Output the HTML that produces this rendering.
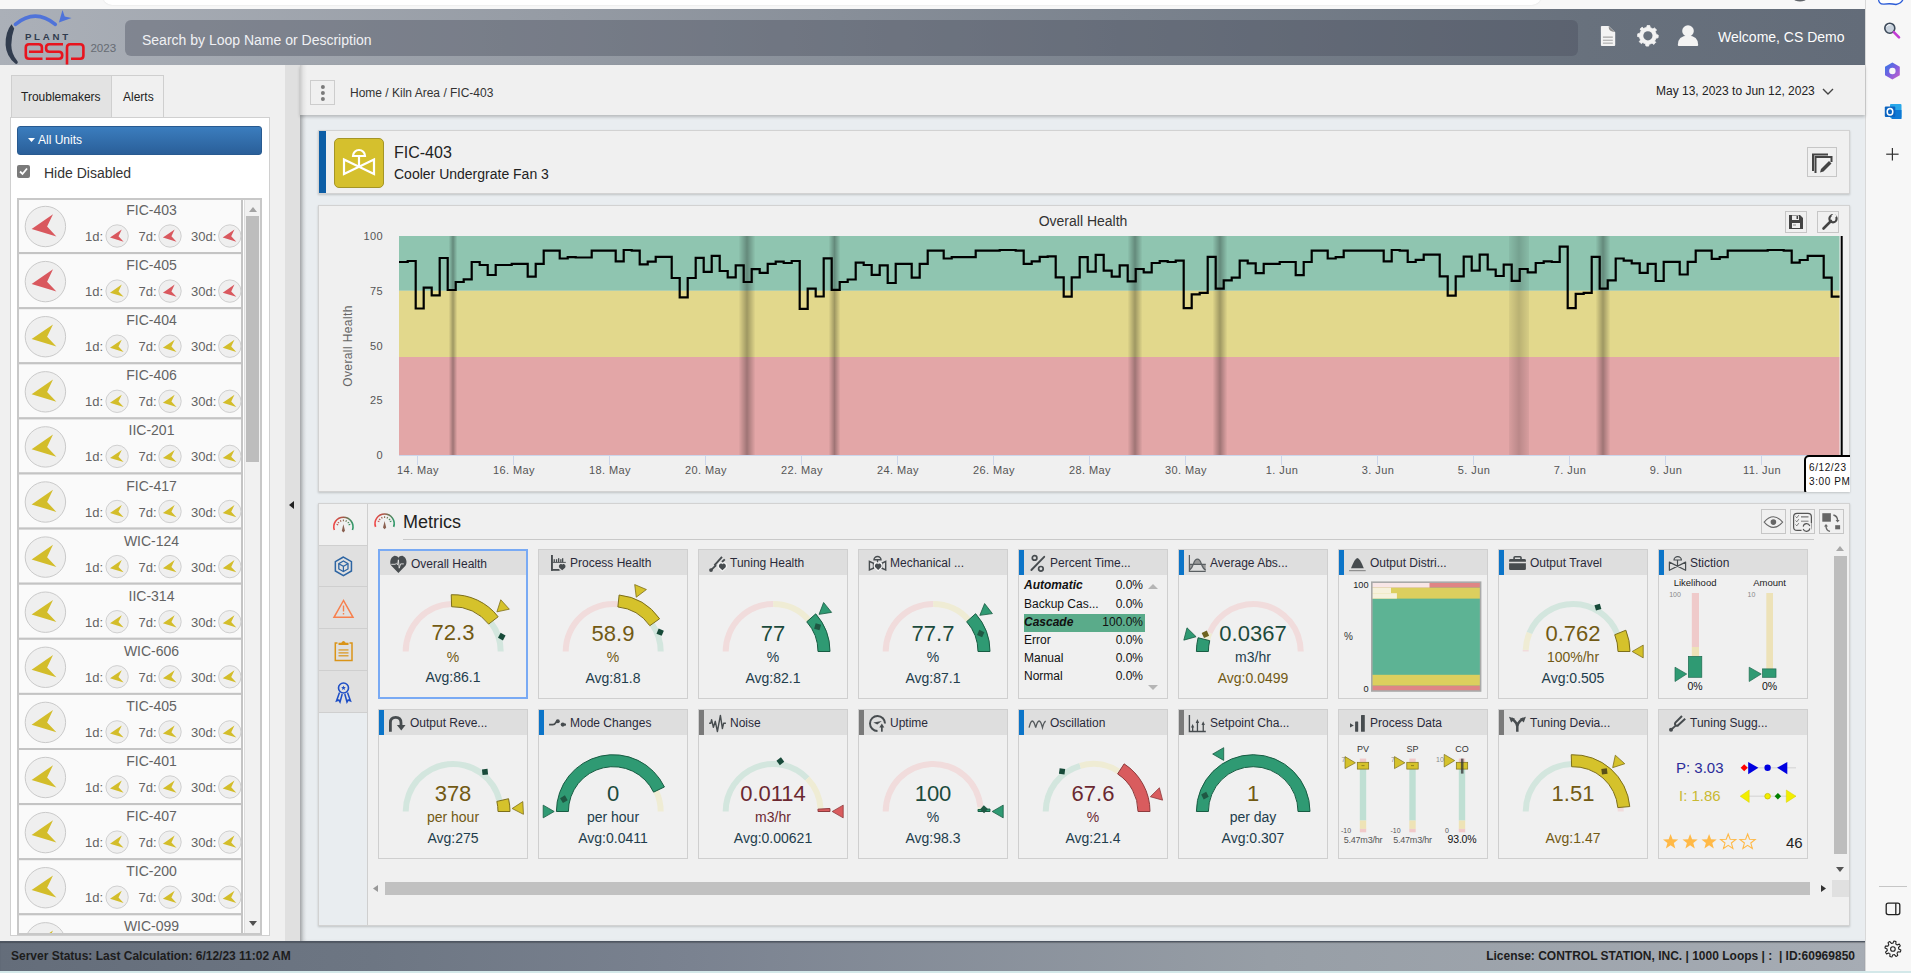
<!DOCTYPE html><html><head><meta charset="utf-8"><style>
*{box-sizing:border-box;margin:0;padding:0}
html,body{width:1911px;height:973px;overflow:hidden;background:#f7f7f7;font-family:"Liberation Sans",sans-serif}
body{position:relative}
.a{position:absolute}
.nw{white-space:nowrap}
.card{position:absolute;background:#f0f0f0;border:1px solid #d2d2d2;box-shadow:0 1px 2px rgba(0,0,0,0.18)}
.btn{position:absolute;background:#f0f0f0;border:1px solid #c6c6c6}
</style></head><body><div class="a" style="left:0;top:0;width:1911px;height:10px;background:#f7f7f7"></div>
<div class="a" style="left:103px;top:-14px;width:1438px;height:19px;background:#fff;border-radius:9px;box-shadow:0 0 2px rgba(0,0,0,0.12)"></div>
<div class="a" style="left:1865px;top:0;width:46px;height:973px;background:#f7f7f7;border-left:1px solid #d8d8d8"></div>
<svg class="a" style="left:1760px;top:0" width="151" height="973"><ellipse cx="40" cy="-1" rx="6" ry="2.6" fill="#606469"/><path d="M118.5,-3 Q118,4.5 124,4.2 Q130,3.2 136,4.5 Q143,3 143.5,-3" fill="#fff" stroke="#2a5bd7" stroke-width="1.3"/><circle cx="129.8" cy="28.2" r="5" fill="#c9d3de" stroke="#3d4a5a" stroke-width="1.6"/><path d="M126.5,26.5 Q128,24.5 130.5,24.8" fill="none" stroke="#fff" stroke-width="1"/><line x1="133.8" y1="32.2" x2="139" y2="37.4" stroke="#c23bd4" stroke-width="2.6" stroke-linecap="round"/><defs><linearGradient id="m365" x1="0" y1="0" x2="1" y2="1"><stop offset="0" stop-color="#2f7be6"/><stop offset="0.5" stop-color="#7a5fe0"/><stop offset="1" stop-color="#d05fc8"/></linearGradient></defs><path d="M132.4,62.5 L139.8,66.8 V75.2 L132.4,79.5 L125,75.2 V66.8 Z" fill="url(#m365)"/><circle cx="132.4" cy="71" r="3.2" fill="#f7f7f7"/><rect x="130" y="104" width="11.5" height="14" rx="1" fill="#28a8ea"/><rect x="131.5" y="110" width="10" height="9" fill="#0f78d4"/><rect x="124.8" y="106.5" width="10.5" height="10.5" rx="1" fill="#0c64c0"/><ellipse cx="130" cy="111.8" rx="2.8" ry="3.3" fill="none" stroke="#fff" stroke-width="1.5"/><line x1="132.4" y1="148" x2="132.4" y2="160.4" stroke="#333" stroke-width="1.2"/><line x1="126.2" y1="154.2" x2="138.6" y2="154.2" stroke="#333" stroke-width="1.2"/><line x1="119" y1="886.5" x2="147" y2="886.5" stroke="#c6c6c6" stroke-width="1"/><rect x="126.2" y="903.2" width="13.6" height="11.4" rx="2" fill="none" stroke="#222" stroke-width="1.3"/><line x1="135.8" y1="903.2" x2="135.8" y2="914.6" stroke="#222" stroke-width="1.3"/></svg>
<svg class="a" style="left:0;top:0" width="1911" height="973"><polygon points="1900.63,951.07 1900.29,952.06 1897.92,951.90 1897.50,952.53 1897.00,953.10 1897.77,955.35 1896.90,955.93 1895.96,956.39 1894.40,954.60 1893.66,954.75 1892.90,954.80 1891.86,956.93 1890.83,956.73 1889.84,956.39 1890.00,954.02 1889.37,953.60 1888.80,953.10 1886.55,953.87 1885.97,953.00 1885.51,952.06 1887.30,950.50 1887.15,949.76 1887.10,949.00 1884.97,947.96 1885.17,946.93 1885.51,945.94 1887.88,946.10 1888.30,945.47 1888.80,944.90 1888.03,942.65 1888.90,942.07 1889.84,941.61 1891.40,943.40 1892.14,943.25 1892.90,943.20 1893.94,941.07 1894.97,941.27 1895.96,941.61 1895.80,943.98 1896.43,944.40 1897.00,944.90 1899.25,944.13 1899.83,945.00 1900.29,945.94 1898.50,947.50 1898.65,948.24 1898.70,949.00 1900.83,950.04" fill="none" stroke="#222" stroke-width="1.1" stroke-linejoin="round"/><circle cx="1892.9" cy="949.0" r="2.3" fill="none" stroke="#222" stroke-width="1.1"/></svg>
<div class="a" style="left:0;top:9px;width:1865px;height:56px;background:linear-gradient(90deg,#abb0b8 0%,#959ba4 30%,#7b838e 60%,#68717d 85%,#636c79 100%)"></div>
<div class="a" style="left:125px;top:20px;width:1453px;height:36px;border-radius:6px;background:rgba(73,78,93,0.4)"></div>
<div class="a nw" style="left:142px;top:32px;font-size:14px;color:#f0f1f4">Search by Loop Name or Description</div>
<div class="a nw" style="left:1718px;top:29px;font-size:14px;color:#fdfdfd">Welcome, CS Demo</div>
<svg class="a" style="left:0;top:0" width="125" height="68"><path d="M15.4,24.4 Q35.3,8 55.3,24.4" fill="none" stroke="#4f73d9" stroke-width="3.6" stroke-linecap="round"/><polygon points="62.5,10 64.7,16.5 71.6,18.1 58.9,22.4" fill="#4f73d9"/><path d="M11.5,24.3 Q5.2,32 5.6,45 Q6.2,56 15.2,63.6 Q16.6,64.4 17.7,62.9 Q18.1,61.6 17,60.4 Q11.4,54 11.3,45 Q11.3,36 14.2,28.4 Z" fill="#313c4e"/><text x="24.9" y="40" font-size="9.7" font-weight="bold" fill="#313c4e" letter-spacing="2.75">PLANT</text><g fill="none" stroke="#e8141e" stroke-width="2.6"><path d="M29,51.8 H41.9 V47.5 Q41.9,44.3 38.7,44.3 H29 Q25.8,44.3 25.8,47.5 V55.5 Q25.8,58.7 29,58.7 H42.5"/><path d="M63,44.3 H49.3 Q46.1,44.3 46.1,47.5 V48.6 Q46.1,51.8 49.3,51.8 H59 Q62.2,51.8 62.2,55 V55.5 Q62.2,58.7 59,58.7 H45.8"/><path d="M67,64.6 V47.5 Q67,44.3 70.2,44.3 H80.2 Q83.4,44.3 83.4,47.5 V55.5 Q83.4,58.7 80.2,58.7 H71"/></g><text x="90.4" y="51.8" font-size="11.6" fill="#666b73">2023</text></svg>
<svg class="a" style="left:0;top:0" width="1865" height="65"><path d="M1601.8,25.9 H1608.8 L1615.2,32.2 V45 Q1615.2,45.9 1614.3,45.9 H1601.8 Q1600.9,45.9 1600.9,45 V26.8 Q1600.9,25.9 1601.8,25.9 Z" fill="#f3f3f3"/><path d="M1608.6,26.2 Q1608.6,31.8 1614.8,32 Z" fill="#8a8a8a"/><g fill="#a8a8a8"><rect x="1602.9" y="36.5" width="9.9" height="1.3"/><rect x="1602.9" y="39.7" width="9.9" height="1.1"/><rect x="1602.9" y="42.6" width="9.9" height="1.1"/></g></svg>
<svg class="a" style="left:0;top:0" width="1865" height="65"><polygon points="1658.17,35.08 1658.20,35.76 1658.18,36.43 1658.12,37.10 1658.01,37.77 1656.02,37.94 1655.87,38.47 1655.67,38.98 1655.45,39.48 1655.19,39.97 1654.90,40.44 1654.59,40.88 1655.67,42.56 1655.21,43.05 1654.72,43.51 1654.21,43.94 1653.66,44.34 1652.13,43.06 1651.65,43.32 1651.15,43.55 1650.63,43.74 1650.11,43.90 1649.57,44.03 1649.03,44.12 1648.62,46.07 1647.94,46.10 1647.27,46.08 1646.60,46.02 1645.93,45.91 1645.76,43.92 1645.23,43.77 1644.72,43.57 1644.22,43.35 1643.73,43.09 1643.26,42.80 1642.82,42.49 1641.14,43.57 1640.65,43.11 1640.19,42.62 1639.76,42.11 1639.36,41.56 1640.64,40.03 1640.38,39.55 1640.15,39.05 1639.96,38.53 1639.80,38.01 1639.67,37.47 1639.58,36.93 1637.63,36.52 1637.60,35.84 1637.62,35.17 1637.68,34.50 1637.79,33.83 1639.78,33.66 1639.93,33.13 1640.13,32.62 1640.35,32.12 1640.61,31.63 1640.90,31.16 1641.21,30.72 1640.13,29.04 1640.59,28.55 1641.08,28.09 1641.59,27.66 1642.14,27.26 1643.67,28.54 1644.15,28.28 1644.65,28.05 1645.17,27.86 1645.69,27.70 1646.23,27.57 1646.77,27.48 1647.18,25.53 1647.86,25.50 1648.53,25.52 1649.20,25.58 1649.87,25.69 1650.04,27.68 1650.57,27.83 1651.08,28.03 1651.58,28.25 1652.07,28.51 1652.54,28.80 1652.98,29.11 1654.66,28.03 1655.15,28.49 1655.61,28.98 1656.04,29.49 1656.44,30.04 1655.16,31.57 1655.42,32.05 1655.65,32.55 1655.84,33.07 1656.00,33.59 1656.13,34.13 1656.22,34.67" fill="#f3f3f3" stroke="#f3f3f3" stroke-width="1" stroke-linejoin="round"/><circle cx="1647.90" cy="35.80" r="4.6" fill="#68717d"/><circle cx="1688" cy="31" r="5.8" fill="#f3f3f3"/><path d="M1677.8,45 Q1677.8,35.6 1688,35.4 Q1698.2,35.6 1698.2,45 Q1698.2,46 1697.2,46 H1678.8 Q1677.8,46 1677.8,45 Z" fill="#f3f3f3"/></svg>
<div class="a" style="left:0;top:65px;width:285px;height:876px;background:#f0f0f0"></div>
<div class="a" style="left:285px;top:65px;width:15px;height:876px;background:#e0e0e0"></div>
<svg class="a" style="left:285px;top:495px" width="15" height="20"><polygon points="4,10 9,6 9,14" fill="#222"/></svg>
<div class="a" style="left:11px;top:75px;width:101px;height:42px;background:#e3e3e3;border:1px solid #cfcfcf;border-bottom:none"></div>
<div class="a nw" style="left:21px;top:90px;font-size:12px;color:#222">Troublemakers</div>
<div class="a" style="left:112px;top:75px;width:52px;height:42px;background:#f0f0f0;border:1px solid #cfcfcf;border-left:none;border-bottom:none"></div>
<div class="a nw" style="left:123px;top:90px;font-size:12px;color:#222">Alerts</div>
<div class="a" style="left:10px;top:117px;width:260px;height:819px;background:#fff;border:1px solid #d0d0d0"></div>
<div class="a" style="left:17px;top:126px;width:245px;height:29px;border-radius:3px;background:linear-gradient(#3b7dbe,#2a5f99);border:1px solid #285a90"></div>
<svg class="a" style="left:28px;top:137px" width="8" height="6"><polygon points="0,1 7,1 3.5,5" fill="#fff"/></svg>
<div class="a nw" style="left:38px;top:133px;font-size:12px;color:#fff">All Units</div>
<div class="a" style="left:17px;top:165px;width:13px;height:13px;background:#7a7a7a;border-radius:2px"></div>
<svg class="a" style="left:17px;top:165px" width="13" height="13"><polyline points="3,6.5 5.5,9 10,3.5" fill="none" stroke="#fff" stroke-width="1.8"/></svg>
<div class="a nw" style="left:44px;top:165px;font-size:14px;color:#333">Hide Disabled</div>
<div class="a" style="left:17px;top:198px;width:245px;height:737px;background:#fff;border:2px solid #c8c8c8;overflow:hidden">
<svg class="a" style="left:-1.6px;top:-1.2px" width="241" height="740"><rect x="0" y="-1.0" width="225" height="55.1" fill="#fafafa" stroke="#c4c4c4" stroke-width="2"/><circle cx="28.4" cy="27.5" r="20.2" fill="#efefef" stroke="#cacaca" stroke-width="1"/><polygon points="14.60,29.90 36.00,15.20 30.10,27.60 39.40,37.40" fill="#d9585e"/><circle cx="100.1" cy="37.0" r="11.2" fill="#efefef" stroke="#d0d0d0" stroke-width="1"/><polygon points="93.00,38.56 104.77,30.48 101.52,37.30 106.64,42.69" fill="#d9585e"/><circle cx="153.0" cy="37.0" r="11.2" fill="#efefef" stroke="#d0d0d0" stroke-width="1"/><polygon points="145.90,38.56 157.67,30.48 154.42,37.30 159.54,42.69" fill="#d9585e"/><circle cx="212.8" cy="37.0" r="11.2" fill="#efefef" stroke="#d0d0d0" stroke-width="1"/><polygon points="205.70,38.56 217.47,30.48 214.22,37.30 219.34,42.69" fill="#d9585e"/><text x="134.5" y="16.0" font-size="14" fill="#636363" text-anchor="middle">FIC-403</text><text x="68" y="42.0" font-size="13" fill="#636363">1d:</text><text x="121.5" y="42.0" font-size="13" fill="#636363">7d:</text><text x="174" y="42.0" font-size="13" fill="#636363">30d:</text><rect x="0" y="54.1" width="225" height="55.1" fill="#fafafa" stroke="#c4c4c4" stroke-width="2"/><circle cx="28.4" cy="82.6" r="20.2" fill="#efefef" stroke="#cacaca" stroke-width="1"/><polygon points="14.60,85.00 36.00,70.30 30.10,82.70 39.40,92.50" fill="#d9585e"/><circle cx="100.1" cy="92.1" r="11.2" fill="#efefef" stroke="#d0d0d0" stroke-width="1"/><polygon points="93.00,93.67 104.77,85.58 101.52,92.40 106.64,97.79" fill="#d3bd2a"/><circle cx="153.0" cy="92.1" r="11.2" fill="#efefef" stroke="#d0d0d0" stroke-width="1"/><polygon points="145.90,93.67 157.67,85.58 154.42,92.40 159.54,97.79" fill="#d9585e"/><circle cx="212.8" cy="92.1" r="11.2" fill="#efefef" stroke="#d0d0d0" stroke-width="1"/><polygon points="205.70,93.67 217.47,85.58 214.22,92.40 219.34,97.79" fill="#d9585e"/><text x="134.5" y="71.1" font-size="14" fill="#636363" text-anchor="middle">FIC-405</text><text x="68" y="97.1" font-size="13" fill="#636363">1d:</text><text x="121.5" y="97.1" font-size="13" fill="#636363">7d:</text><text x="174" y="97.1" font-size="13" fill="#636363">30d:</text><rect x="0" y="109.2" width="225" height="55.1" fill="#fafafa" stroke="#c4c4c4" stroke-width="2"/><circle cx="28.4" cy="137.7" r="20.2" fill="#efefef" stroke="#cacaca" stroke-width="1"/><polygon points="14.60,140.10 36.00,125.40 30.10,137.80 39.40,147.60" fill="#d3bd2a"/><circle cx="100.1" cy="147.2" r="11.2" fill="#efefef" stroke="#d0d0d0" stroke-width="1"/><polygon points="93.00,148.76 104.77,140.68 101.52,147.50 106.64,152.89" fill="#d3bd2a"/><circle cx="153.0" cy="147.2" r="11.2" fill="#efefef" stroke="#d0d0d0" stroke-width="1"/><polygon points="145.90,148.76 157.67,140.68 154.42,147.50 159.54,152.89" fill="#d3bd2a"/><circle cx="212.8" cy="147.2" r="11.2" fill="#efefef" stroke="#d0d0d0" stroke-width="1"/><polygon points="205.70,148.76 217.47,140.68 214.22,147.50 219.34,152.89" fill="#d3bd2a"/><text x="134.5" y="126.2" font-size="14" fill="#636363" text-anchor="middle">FIC-404</text><text x="68" y="152.2" font-size="13" fill="#636363">1d:</text><text x="121.5" y="152.2" font-size="13" fill="#636363">7d:</text><text x="174" y="152.2" font-size="13" fill="#636363">30d:</text><rect x="0" y="164.3" width="225" height="55.1" fill="#fafafa" stroke="#c4c4c4" stroke-width="2"/><circle cx="28.4" cy="192.8" r="20.2" fill="#efefef" stroke="#cacaca" stroke-width="1"/><polygon points="14.60,195.20 36.00,180.50 30.10,192.90 39.40,202.70" fill="#d3bd2a"/><circle cx="100.1" cy="202.3" r="11.2" fill="#efefef" stroke="#d0d0d0" stroke-width="1"/><polygon points="93.00,203.87 104.77,195.78 101.52,202.60 106.64,207.99" fill="#d3bd2a"/><circle cx="153.0" cy="202.3" r="11.2" fill="#efefef" stroke="#d0d0d0" stroke-width="1"/><polygon points="145.90,203.87 157.67,195.78 154.42,202.60 159.54,207.99" fill="#d3bd2a"/><circle cx="212.8" cy="202.3" r="11.2" fill="#efefef" stroke="#d0d0d0" stroke-width="1"/><polygon points="205.70,203.87 217.47,195.78 214.22,202.60 219.34,207.99" fill="#d3bd2a"/><text x="134.5" y="181.3" font-size="14" fill="#636363" text-anchor="middle">FIC-406</text><text x="68" y="207.3" font-size="13" fill="#636363">1d:</text><text x="121.5" y="207.3" font-size="13" fill="#636363">7d:</text><text x="174" y="207.3" font-size="13" fill="#636363">30d:</text><rect x="0" y="219.4" width="225" height="55.1" fill="#fafafa" stroke="#c4c4c4" stroke-width="2"/><circle cx="28.4" cy="247.9" r="20.2" fill="#efefef" stroke="#cacaca" stroke-width="1"/><polygon points="14.60,250.30 36.00,235.60 30.10,248.00 39.40,257.80" fill="#d3bd2a"/><circle cx="100.1" cy="257.4" r="11.2" fill="#efefef" stroke="#d0d0d0" stroke-width="1"/><polygon points="93.00,258.96 104.77,250.88 101.52,257.70 106.64,263.09" fill="#d3bd2a"/><circle cx="153.0" cy="257.4" r="11.2" fill="#efefef" stroke="#d0d0d0" stroke-width="1"/><polygon points="145.90,258.96 157.67,250.88 154.42,257.70 159.54,263.09" fill="#d3bd2a"/><circle cx="212.8" cy="257.4" r="11.2" fill="#efefef" stroke="#d0d0d0" stroke-width="1"/><polygon points="205.70,258.96 217.47,250.88 214.22,257.70 219.34,263.09" fill="#d3bd2a"/><text x="134.5" y="236.4" font-size="14" fill="#636363" text-anchor="middle">IIC-201</text><text x="68" y="262.4" font-size="13" fill="#636363">1d:</text><text x="121.5" y="262.4" font-size="13" fill="#636363">7d:</text><text x="174" y="262.4" font-size="13" fill="#636363">30d:</text><rect x="0" y="274.5" width="225" height="55.1" fill="#fafafa" stroke="#c4c4c4" stroke-width="2"/><circle cx="28.4" cy="303.0" r="20.2" fill="#efefef" stroke="#cacaca" stroke-width="1"/><polygon points="14.60,305.40 36.00,290.70 30.10,303.10 39.40,312.90" fill="#d3bd2a"/><circle cx="100.1" cy="312.5" r="11.2" fill="#efefef" stroke="#d0d0d0" stroke-width="1"/><polygon points="93.00,314.06 104.77,305.98 101.52,312.80 106.64,318.19" fill="#d3bd2a"/><circle cx="153.0" cy="312.5" r="11.2" fill="#efefef" stroke="#d0d0d0" stroke-width="1"/><polygon points="145.90,314.06 157.67,305.98 154.42,312.80 159.54,318.19" fill="#d3bd2a"/><circle cx="212.8" cy="312.5" r="11.2" fill="#efefef" stroke="#d0d0d0" stroke-width="1"/><polygon points="205.70,314.06 217.47,305.98 214.22,312.80 219.34,318.19" fill="#d3bd2a"/><text x="134.5" y="291.5" font-size="14" fill="#636363" text-anchor="middle">FIC-417</text><text x="68" y="317.5" font-size="13" fill="#636363">1d:</text><text x="121.5" y="317.5" font-size="13" fill="#636363">7d:</text><text x="174" y="317.5" font-size="13" fill="#636363">30d:</text><rect x="0" y="329.6" width="225" height="55.1" fill="#fafafa" stroke="#c4c4c4" stroke-width="2"/><circle cx="28.4" cy="358.1" r="20.2" fill="#efefef" stroke="#cacaca" stroke-width="1"/><polygon points="14.60,360.50 36.00,345.80 30.10,358.20 39.40,368.00" fill="#d3bd2a"/><circle cx="100.1" cy="367.6" r="11.2" fill="#efefef" stroke="#d0d0d0" stroke-width="1"/><polygon points="93.00,369.17 104.77,361.08 101.52,367.90 106.64,373.29" fill="#d3bd2a"/><circle cx="153.0" cy="367.6" r="11.2" fill="#efefef" stroke="#d0d0d0" stroke-width="1"/><polygon points="145.90,369.17 157.67,361.08 154.42,367.90 159.54,373.29" fill="#d3bd2a"/><circle cx="212.8" cy="367.6" r="11.2" fill="#efefef" stroke="#d0d0d0" stroke-width="1"/><polygon points="205.70,369.17 217.47,361.08 214.22,367.90 219.34,373.29" fill="#d3bd2a"/><text x="134.5" y="346.6" font-size="14" fill="#636363" text-anchor="middle">WIC-124</text><text x="68" y="372.6" font-size="13" fill="#636363">1d:</text><text x="121.5" y="372.6" font-size="13" fill="#636363">7d:</text><text x="174" y="372.6" font-size="13" fill="#636363">30d:</text><rect x="0" y="384.7" width="225" height="55.1" fill="#fafafa" stroke="#c4c4c4" stroke-width="2"/><circle cx="28.4" cy="413.2" r="20.2" fill="#efefef" stroke="#cacaca" stroke-width="1"/><polygon points="14.60,415.60 36.00,400.90 30.10,413.30 39.40,423.10" fill="#d3bd2a"/><circle cx="100.1" cy="422.7" r="11.2" fill="#efefef" stroke="#d0d0d0" stroke-width="1"/><polygon points="93.00,424.26 104.77,416.18 101.52,423.00 106.64,428.39" fill="#d3bd2a"/><circle cx="153.0" cy="422.7" r="11.2" fill="#efefef" stroke="#d0d0d0" stroke-width="1"/><polygon points="145.90,424.26 157.67,416.18 154.42,423.00 159.54,428.39" fill="#d3bd2a"/><circle cx="212.8" cy="422.7" r="11.2" fill="#efefef" stroke="#d0d0d0" stroke-width="1"/><polygon points="205.70,424.26 217.47,416.18 214.22,423.00 219.34,428.39" fill="#d3bd2a"/><text x="134.5" y="401.7" font-size="14" fill="#636363" text-anchor="middle">IIC-314</text><text x="68" y="427.7" font-size="13" fill="#636363">1d:</text><text x="121.5" y="427.7" font-size="13" fill="#636363">7d:</text><text x="174" y="427.7" font-size="13" fill="#636363">30d:</text><rect x="0" y="439.8" width="225" height="55.1" fill="#fafafa" stroke="#c4c4c4" stroke-width="2"/><circle cx="28.4" cy="468.3" r="20.2" fill="#efefef" stroke="#cacaca" stroke-width="1"/><polygon points="14.60,470.70 36.00,456.00 30.10,468.40 39.40,478.20" fill="#d3bd2a"/><circle cx="100.1" cy="477.8" r="11.2" fill="#efefef" stroke="#d0d0d0" stroke-width="1"/><polygon points="93.00,479.37 104.77,471.28 101.52,478.10 106.64,483.49" fill="#d3bd2a"/><circle cx="153.0" cy="477.8" r="11.2" fill="#efefef" stroke="#d0d0d0" stroke-width="1"/><polygon points="145.90,479.37 157.67,471.28 154.42,478.10 159.54,483.49" fill="#d3bd2a"/><circle cx="212.8" cy="477.8" r="11.2" fill="#efefef" stroke="#d0d0d0" stroke-width="1"/><polygon points="205.70,479.37 217.47,471.28 214.22,478.10 219.34,483.49" fill="#d3bd2a"/><text x="134.5" y="456.8" font-size="14" fill="#636363" text-anchor="middle">WIC-606</text><text x="68" y="482.8" font-size="13" fill="#636363">1d:</text><text x="121.5" y="482.8" font-size="13" fill="#636363">7d:</text><text x="174" y="482.8" font-size="13" fill="#636363">30d:</text><rect x="0" y="494.9" width="225" height="55.1" fill="#fafafa" stroke="#c4c4c4" stroke-width="2"/><circle cx="28.4" cy="523.4" r="20.2" fill="#efefef" stroke="#cacaca" stroke-width="1"/><polygon points="14.60,525.80 36.00,511.10 30.10,523.50 39.40,533.30" fill="#d3bd2a"/><circle cx="100.1" cy="532.9" r="11.2" fill="#efefef" stroke="#d0d0d0" stroke-width="1"/><polygon points="93.00,534.47 104.77,526.38 101.52,533.20 106.64,538.59" fill="#d3bd2a"/><circle cx="153.0" cy="532.9" r="11.2" fill="#efefef" stroke="#d0d0d0" stroke-width="1"/><polygon points="145.90,534.47 157.67,526.38 154.42,533.20 159.54,538.59" fill="#d3bd2a"/><circle cx="212.8" cy="532.9" r="11.2" fill="#efefef" stroke="#d0d0d0" stroke-width="1"/><polygon points="205.70,534.47 217.47,526.38 214.22,533.20 219.34,538.59" fill="#d3bd2a"/><text x="134.5" y="511.9" font-size="14" fill="#636363" text-anchor="middle">TIC-405</text><text x="68" y="537.9" font-size="13" fill="#636363">1d:</text><text x="121.5" y="537.9" font-size="13" fill="#636363">7d:</text><text x="174" y="537.9" font-size="13" fill="#636363">30d:</text><rect x="0" y="550.0" width="225" height="55.1" fill="#fafafa" stroke="#c4c4c4" stroke-width="2"/><circle cx="28.4" cy="578.5" r="20.2" fill="#efefef" stroke="#cacaca" stroke-width="1"/><polygon points="14.60,580.90 36.00,566.20 30.10,578.60 39.40,588.40" fill="#d3bd2a"/><circle cx="100.1" cy="588.0" r="11.2" fill="#efefef" stroke="#d0d0d0" stroke-width="1"/><polygon points="93.00,589.56 104.77,581.48 101.52,588.30 106.64,593.69" fill="#d3bd2a"/><circle cx="153.0" cy="588.0" r="11.2" fill="#efefef" stroke="#d0d0d0" stroke-width="1"/><polygon points="145.90,589.56 157.67,581.48 154.42,588.30 159.54,593.69" fill="#d3bd2a"/><circle cx="212.8" cy="588.0" r="11.2" fill="#efefef" stroke="#d0d0d0" stroke-width="1"/><polygon points="205.70,589.56 217.47,581.48 214.22,588.30 219.34,593.69" fill="#d3bd2a"/><text x="134.5" y="567.0" font-size="14" fill="#636363" text-anchor="middle">FIC-401</text><text x="68" y="593.0" font-size="13" fill="#636363">1d:</text><text x="121.5" y="593.0" font-size="13" fill="#636363">7d:</text><text x="174" y="593.0" font-size="13" fill="#636363">30d:</text><rect x="0" y="605.1" width="225" height="55.1" fill="#fafafa" stroke="#c4c4c4" stroke-width="2"/><circle cx="28.4" cy="633.6" r="20.2" fill="#efefef" stroke="#cacaca" stroke-width="1"/><polygon points="14.60,636.00 36.00,621.30 30.10,633.70 39.40,643.50" fill="#d3bd2a"/><circle cx="100.1" cy="643.1" r="11.2" fill="#efefef" stroke="#d0d0d0" stroke-width="1"/><polygon points="93.00,644.66 104.77,636.58 101.52,643.40 106.64,648.79" fill="#d3bd2a"/><circle cx="153.0" cy="643.1" r="11.2" fill="#efefef" stroke="#d0d0d0" stroke-width="1"/><polygon points="145.90,644.66 157.67,636.58 154.42,643.40 159.54,648.79" fill="#d3bd2a"/><circle cx="212.8" cy="643.1" r="11.2" fill="#efefef" stroke="#d0d0d0" stroke-width="1"/><polygon points="205.70,644.66 217.47,636.58 214.22,643.40 219.34,648.79" fill="#d3bd2a"/><text x="134.5" y="622.1" font-size="14" fill="#636363" text-anchor="middle">FIC-407</text><text x="68" y="648.1" font-size="13" fill="#636363">1d:</text><text x="121.5" y="648.1" font-size="13" fill="#636363">7d:</text><text x="174" y="648.1" font-size="13" fill="#636363">30d:</text><rect x="0" y="660.2" width="225" height="55.1" fill="#fafafa" stroke="#c4c4c4" stroke-width="2"/><circle cx="28.4" cy="688.7" r="20.2" fill="#efefef" stroke="#cacaca" stroke-width="1"/><polygon points="14.60,691.10 36.00,676.40 30.10,688.80 39.40,698.60" fill="#d3bd2a"/><circle cx="100.1" cy="698.2" r="11.2" fill="#efefef" stroke="#d0d0d0" stroke-width="1"/><polygon points="93.00,699.76 104.77,691.68 101.52,698.50 106.64,703.89" fill="#d3bd2a"/><circle cx="153.0" cy="698.2" r="11.2" fill="#efefef" stroke="#d0d0d0" stroke-width="1"/><polygon points="145.90,699.76 157.67,691.68 154.42,698.50 159.54,703.89" fill="#d3bd2a"/><circle cx="212.8" cy="698.2" r="11.2" fill="#efefef" stroke="#d0d0d0" stroke-width="1"/><polygon points="205.70,699.76 217.47,691.68 214.22,698.50 219.34,703.89" fill="#d3bd2a"/><text x="134.5" y="677.2" font-size="14" fill="#636363" text-anchor="middle">TIC-200</text><text x="68" y="703.2" font-size="13" fill="#636363">1d:</text><text x="121.5" y="703.2" font-size="13" fill="#636363">7d:</text><text x="174" y="703.2" font-size="13" fill="#636363">30d:</text><rect x="0" y="715.3" width="225" height="55.1" fill="#fafafa" stroke="#c4c4c4" stroke-width="2"/><circle cx="28.4" cy="743.8" r="20.2" fill="#efefef" stroke="#cacaca" stroke-width="1"/><polygon points="14.60,746.20 36.00,731.50 30.10,743.90 39.40,753.70" fill="#d3bd2a"/><circle cx="100.1" cy="753.3" r="11.2" fill="#efefef" stroke="#d0d0d0" stroke-width="1"/><polygon points="93.00,754.87 104.77,746.78 101.52,753.60 106.64,758.99" fill="#d3bd2a"/><circle cx="153.0" cy="753.3" r="11.2" fill="#efefef" stroke="#d0d0d0" stroke-width="1"/><polygon points="145.90,754.87 157.67,746.78 154.42,753.60 159.54,758.99" fill="#d3bd2a"/><circle cx="212.8" cy="753.3" r="11.2" fill="#efefef" stroke="#d0d0d0" stroke-width="1"/><polygon points="205.70,754.87 217.47,746.78 214.22,753.60 219.34,758.99" fill="#d3bd2a"/><text x="134.5" y="732.3" font-size="14" fill="#636363" text-anchor="middle">WIC-099</text><text x="68" y="758.3" font-size="13" fill="#636363">1d:</text><text x="121.5" y="758.3" font-size="13" fill="#636363">7d:</text><text x="174" y="758.3" font-size="13" fill="#636363">30d:</text></svg>
<div class="a" style="left:225px;top:0;width:18px;height:735px;background:#f1f1f1;border-left:1px solid #ddd"></div>
<svg class="a" style="left:225px;top:0" width="18" height="735"><polygon points="5,12 13,12 9,7" fill="#a3a3a3"/><polygon points="5,721 13,721 9,726" fill="#505050"/></svg>
<div class="a" style="left:227px;top:16px;width:13px;height:246px;background:#bdbdbd"></div>
</div>
<div class="a" style="left:300px;top:65px;width:1565px;height:876px;background:#e9edf0;box-shadow:inset 4px 0 4px -2px rgba(0,0,0,0.2)"></div>
<div class="a" style="left:300px;top:65px;width:1565px;height:50px;background:#f0f0f0;box-shadow:0 2px 3px rgba(0,0,0,0.22)"></div>
<div class="a" style="left:300px;top:65px;width:7px;height:876px;background:linear-gradient(90deg,rgba(0,0,0,0.16),rgba(0,0,0,0.05) 45%,rgba(0,0,0,0))"></div>
<div class="btn" style="left:310px;top:80px;width:25px;height:25px;border-color:#cdcdcd"></div>
<svg class="a" style="left:310px;top:80px" width="25" height="25"><circle cx="12.9" cy="6.9" r="2" fill="#7a7a7a"/><circle cx="12.9" cy="12.9" r="2" fill="#7a7a7a"/><circle cx="12.9" cy="18.9" r="2" fill="#7a7a7a"/></svg>
<div class="a nw" style="left:350px;top:86px;font-size:12px;color:#333">Home / Kiln Area / FIC-403</div>
<div class="a nw" style="left:1656px;top:84px;font-size:12px;color:#222">May 13, 2023 to Jun 12, 2023</div>
<svg class="a" style="left:1820px;top:84px" width="16" height="14"><polyline points="3,5 8,10 13,5" fill="none" stroke="#444" stroke-width="1.4"/></svg>
<div class="card" style="left:318px;top:130px;width:1532px;height:64px"></div>
<div class="a" style="left:319px;top:131px;width:7px;height:62px;background:#0d5ea6"></div>
<div class="a" style="left:334px;top:138px;width:50px;height:50px;background:#d5c02d;border:1px solid #a49526;border-radius:5px"></div>
<svg class="a" style="left:334px;top:138px" width="50" height="50"><path d="M10,21.5 L40,36 V21.5 L10,36 Z" fill="none" stroke="#fff" stroke-width="2.2" stroke-linejoin="miter"/><line x1="25" y1="28.7" x2="25" y2="18" stroke="#fff" stroke-width="2.2"/><path d="M19,18 A6,6 0 0 1 31,18 Z" fill="none" stroke="#fff" stroke-width="2.2"/></svg>
<div class="a nw" style="left:394px;top:144px;font-size:16px;color:#222">FIC-403</div>
<div class="a nw" style="left:394px;top:166px;font-size:14px;color:#222">Cooler Undergrate Fan 3</div>
<div class="btn" style="left:1807px;top:147px;width:30px;height:30px"></div>
<svg class="a" style="left:1807px;top:147px" width="30" height="30"><path d="M6,24 V7.5 H21" fill="none" stroke="#444" stroke-width="2"/><path d="M8.5,26 V10 H24.5 V15" fill="none" stroke="#444" stroke-width="2"/><path d="M13,25.5 L14,22 L22,14 L24.5,16.5 L16.5,24.5 Z" fill="#444"/></svg>
<div class="card" style="left:318px;top:205px;width:1532px;height:287px"></div>
<svg class="a" style="left:0;top:0" width="1865" height="500"><rect x="399" y="236" width="1440.5" height="54.8" fill="#8fc5b0"/><rect x="399" y="290.8" width="1440.5" height="66.2" fill="#e2d88c"/><rect x="399" y="357.0" width="1440.5" height="98.0" fill="#e3a6a7"/><defs><linearGradient id="vb" x1="0" x2="1" y1="0" y2="0"><stop offset="0" stop-color="#000" stop-opacity="0.02"/><stop offset="0.5" stop-color="#000" stop-opacity="0.30"/><stop offset="1" stop-color="#000" stop-opacity="0.02"/></linearGradient><linearGradient id="vb2" x1="0" x2="1" y1="0" y2="0"><stop offset="0" stop-color="#000" stop-opacity="0.05"/><stop offset="0.5" stop-color="#000" stop-opacity="0.18"/><stop offset="1" stop-color="#000" stop-opacity="0.05"/></linearGradient></defs><rect x="449" y="236" width="8" height="219" fill="url(#vb)"/><rect x="739" y="236" width="16" height="219" fill="url(#vb)"/><rect x="829" y="236" width="11" height="219" fill="url(#vb)"/><rect x="1128" y="236" width="14" height="219" fill="url(#vb)"/><rect x="1213" y="236" width="14" height="219" fill="url(#vb)"/><rect x="1509" y="236" width="20" height="219" fill="url(#vb2)"/><rect x="1596" y="236" width="14" height="219" fill="url(#vb)"/><path d="M399,262.0 H407.7 V261.0 H415.7 V308.5 H423.7 V287.6 H431.7 V295.4 H439.7 V258.0 H447.7 V290.0 H455.7 V282.0 H463.7 V279.3 H471.7 V262.0 H479.7 V265.0 H487.7 V275.0 H495.7 V265.0 H503.7 V265.0 H511.7 V263.8 H519.7 V263.8 H527.7 V276.7 H535.7 V263.8 H543.7 V250.7 H551.7 V250.7 H559.7 V258.5 H567.7 V257.2 H575.7 V257.5 H583.7 V257.5 H591.7 V250.7 H599.7 V250.7 H607.7 V250.7 H615.7 V261.4 H623.7 V250.0 H631.7 V250.7 H639.7 V264.3 H647.7 V261.7 H655.7 V256.8 H663.7 V256.8 H671.7 V278.0 H679.7 V297.4 H687.7 V278.0 H695.7 V257.9 H703.7 V271.9 H711.7 V255.8 H719.7 V271.0 H727.7 V277.4 H735.7 V265.3 H743.7 V282.0 H751.7 V269.2 H759.7 V272.9 H767.7 V263.8 H775.7 V261.7 H783.7 V263.0 H791.7 V261.0 H799.7 V308.8 H807.7 V288.6 H815.7 V296.5 H823.7 V258.4 H831.7 V289.9 H839.7 V282.0 H847.7 V279.5 H855.7 V262.7 H863.7 V265.0 H871.7 V274.9 H879.7 V265.3 H887.7 V283.0 H895.7 V263.8 H903.7 V263.8 H911.7 V277.7 H919.7 V263.8 H927.7 V250.7 H935.7 V250.7 H943.7 V258.5 H951.7 V257.2 H959.7 V257.2 H967.7 V257.2 H975.7 V250.7 H983.7 V250.7 H991.7 V250.7 H999.7 V250.0 H1007.7 V250.0 H1015.7 V250.7 H1023.7 V263.8 H1031.7 V261.4 H1039.7 V256.8 H1047.7 V256.4 H1055.7 V277.4 H1063.7 V296.7 H1071.7 V277.4 H1079.7 V257.2 H1087.7 V271.6 H1095.7 V254.9 H1103.7 V270.6 H1111.7 V276.7 H1119.7 V265.3 H1127.7 V281.3 H1135.7 V269.0 H1143.7 V272.3 H1151.7 V263.0 H1159.7 V261.1 H1167.7 V262.0 H1175.7 V260.7 H1183.7 V308.2 H1191.7 V294.4 H1199.7 V292.8 H1207.7 V256.8 H1215.7 V288.6 H1223.7 V280.4 H1231.7 V277.7 H1239.7 V260.7 H1247.7 V263.4 H1255.7 V273.2 H1263.7 V263.8 H1271.7 V263.8 H1279.7 V262.0 H1287.7 V262.0 H1295.7 V275.1 H1303.7 V262.0 H1311.7 V250.7 H1319.7 V250.7 H1327.7 V258.5 H1335.7 V257.2 H1343.7 V250.7 H1351.7 V250.7 H1359.7 V250.7 H1367.7 V250.7 H1375.7 V250.7 H1383.7 V261.4 H1391.7 V250.0 H1399.7 V250.7 H1407.7 V262.0 H1415.7 V259.8 H1423.7 V254.6 H1431.7 V254.6 H1439.7 V276.4 H1447.7 V295.7 H1455.7 V276.4 H1463.7 V256.6 H1471.7 V270.6 H1479.7 V254.6 H1487.7 V269.5 H1495.7 V276.0 H1503.7 V264.7 H1511.7 V280.8 H1519.7 V269.0 H1527.7 V272.3 H1535.7 V263.0 H1543.7 V261.4 H1551.7 V262.0 H1559.7 V246.7 H1567.7 V308.2 H1575.7 V293.8 H1583.7 V292.8 H1591.7 V256.8 H1599.7 V288.6 H1607.7 V280.4 H1615.7 V258.5 H1623.7 V260.7 H1631.7 V263.4 H1639.7 V272.9 H1647.7 V263.8 H1655.7 V281.0 H1663.7 V261.8 H1671.7 V261.8 H1679.7 V274.5 H1687.7 V261.8 H1695.7 V250.7 H1703.7 V250.7 H1711.7 V258.8 H1719.7 V257.2 H1727.7 V250.7 H1735.7 V250.7 H1743.7 V250.7 H1751.7 V250.7 H1759.7 V250.7 H1767.7 V250.0 H1775.7 V250.0 H1783.7 V250.7 H1791.7 V262.7 H1799.7 V260.0 H1807.7 V255.8 H1815.7 V255.8 H1823.7 V277.7 H1831.7 V296.7 H1839.5" fill="none" stroke="#000" stroke-width="2.2" stroke-linejoin="miter"/><rect x="1840.7" y="236" width="2" height="219" fill="#000"/><line x1="399" y1="455.5" x2="1840" y2="455.5" stroke="#ccd6eb" stroke-width="1"/><line x1="417.5" y1="455" x2="417.5" y2="465" stroke="#ccd6eb" stroke-width="1"/><text x="418" y="474" font-size="11" fill="#555" text-anchor="middle" letter-spacing="0.4">14. May</text><line x1="513.5" y1="455" x2="513.5" y2="465" stroke="#ccd6eb" stroke-width="1"/><text x="514" y="474" font-size="11" fill="#555" text-anchor="middle" letter-spacing="0.4">16. May</text><line x1="609.5" y1="455" x2="609.5" y2="465" stroke="#ccd6eb" stroke-width="1"/><text x="610" y="474" font-size="11" fill="#555" text-anchor="middle" letter-spacing="0.4">18. May</text><line x1="705.5" y1="455" x2="705.5" y2="465" stroke="#ccd6eb" stroke-width="1"/><text x="706" y="474" font-size="11" fill="#555" text-anchor="middle" letter-spacing="0.4">20. May</text><line x1="801.5" y1="455" x2="801.5" y2="465" stroke="#ccd6eb" stroke-width="1"/><text x="802" y="474" font-size="11" fill="#555" text-anchor="middle" letter-spacing="0.4">22. May</text><line x1="897.5" y1="455" x2="897.5" y2="465" stroke="#ccd6eb" stroke-width="1"/><text x="898" y="474" font-size="11" fill="#555" text-anchor="middle" letter-spacing="0.4">24. May</text><line x1="993.5" y1="455" x2="993.5" y2="465" stroke="#ccd6eb" stroke-width="1"/><text x="994" y="474" font-size="11" fill="#555" text-anchor="middle" letter-spacing="0.4">26. May</text><line x1="1089.5" y1="455" x2="1089.5" y2="465" stroke="#ccd6eb" stroke-width="1"/><text x="1090" y="474" font-size="11" fill="#555" text-anchor="middle" letter-spacing="0.4">28. May</text><line x1="1185.5" y1="455" x2="1185.5" y2="465" stroke="#ccd6eb" stroke-width="1"/><text x="1186" y="474" font-size="11" fill="#555" text-anchor="middle" letter-spacing="0.4">30. May</text><line x1="1281.5" y1="455" x2="1281.5" y2="465" stroke="#ccd6eb" stroke-width="1"/><text x="1282" y="474" font-size="11" fill="#555" text-anchor="middle" letter-spacing="0.4">1. Jun</text><line x1="1377.5" y1="455" x2="1377.5" y2="465" stroke="#ccd6eb" stroke-width="1"/><text x="1378" y="474" font-size="11" fill="#555" text-anchor="middle" letter-spacing="0.4">3. Jun</text><line x1="1473.5" y1="455" x2="1473.5" y2="465" stroke="#ccd6eb" stroke-width="1"/><text x="1474" y="474" font-size="11" fill="#555" text-anchor="middle" letter-spacing="0.4">5. Jun</text><line x1="1569.5" y1="455" x2="1569.5" y2="465" stroke="#ccd6eb" stroke-width="1"/><text x="1570" y="474" font-size="11" fill="#555" text-anchor="middle" letter-spacing="0.4">7. Jun</text><line x1="1665.5" y1="455" x2="1665.5" y2="465" stroke="#ccd6eb" stroke-width="1"/><text x="1666" y="474" font-size="11" fill="#555" text-anchor="middle" letter-spacing="0.4">9. Jun</text><line x1="1761.5" y1="455" x2="1761.5" y2="465" stroke="#ccd6eb" stroke-width="1"/><text x="1762" y="474" font-size="11" fill="#555" text-anchor="middle" letter-spacing="0.4">11. Jun</text><text x="383" y="240" font-size="11" fill="#555" text-anchor="end" letter-spacing="0.4">100</text><text x="383" y="295" font-size="11" fill="#555" text-anchor="end" letter-spacing="0.4">75</text><text x="383" y="350" font-size="11" fill="#555" text-anchor="end" letter-spacing="0.4">50</text><text x="383" y="404" font-size="11" fill="#555" text-anchor="end" letter-spacing="0.4">25</text><text x="383" y="459" font-size="11" fill="#555" text-anchor="end" letter-spacing="0.4">0</text><text x="0" y="0" font-size="12" fill="#666" text-anchor="middle" letter-spacing="0.4" transform="translate(352,346) rotate(-90)">Overall Health</text><text x="1083" y="226" font-size="14" fill="#333" text-anchor="middle">Overall Health</text></svg>
<div class="a" style="left:1804px;top:455px;width:46px;height:37px;overflow:hidden"><div class="a" style="left:0;top:0;width:56px;height:40px;background:#fff;border:2px solid #000;border-radius:5px"></div><div class="a nw" style="left:5px;top:6px;font-size:10px;line-height:14px;color:#111;letter-spacing:0.6px">6/12/23<br>3:00 PM</div></div>
<div class="btn" style="left:1785px;top:211px;width:22px;height:22px"></div>
<div class="btn" style="left:1817px;top:211px;width:22px;height:22px"></div>
<svg class="a" style="left:1785px;top:211px" width="60" height="22"><path d="M4,4 H15 L18,7 V18 H4 Z" fill="#444"/><rect x="7" y="4.5" width="7" height="4.5" fill="#f0f0f0"/><rect x="11.5" y="5" width="1.6" height="3" fill="#444"/><rect x="7" y="12" width="8" height="5" fill="#f0f0f0"/><rect x="8" y="13.5" width="3" height="1" fill="#888"/><path d="M38.5,17.5 L46,10" stroke="#444" stroke-width="2.6" stroke-linecap="round"/><circle cx="48" cy="7.8" r="3.6" fill="none" stroke="#444" stroke-width="2.2"/><rect x="47" y="3" width="4" height="4" fill="#f0f0f0" transform="rotate(45 49 5)"/></svg>
<div class="card" style="left:318px;top:503px;width:1532px;height:423px"></div>
<div class="a" style="left:319px;top:713px;width:49px;height:212px;background:#e9edf0"></div>
<div class="a" style="left:367px;top:504px;width:1px;height:421px;background:#cfcfcf"></div>
<div class="a" style="left:319px;top:545px;width:48px;height:42px;background:#e0e0e0;border-top:1px solid #cfcfcf"></div>
<div class="a" style="left:319px;top:586px;width:48px;height:42px;background:#e0e0e0;border-top:1px solid #cfcfcf"></div>
<div class="a" style="left:319px;top:628px;width:48px;height:42px;background:#e0e0e0;border-top:1px solid #cfcfcf"></div>
<div class="a" style="left:319px;top:670px;width:48px;height:42px;background:#e0e0e0;border-top:1px solid #cfcfcf"></div>
<div class="a" style="left:319px;top:712px;width:48px;height:1px;background:#cfcfcf"></div>
<div class="a nw" style="left:403px;top:512px;font-size:18px;color:#222">Metrics</div>
<div class="a" style="left:403px;top:539px;width:1411px;height:1px;background:#c9c9c9"></div>
<div class="btn" style="left:1761px;top:509px;width:25px;height:25px"></div>
<div class="btn" style="left:1790px;top:509px;width:25px;height:25px"></div>
<div class="btn" style="left:1819px;top:509px;width:25px;height:25px"></div>
<div class="a" style="left:378px;top:549px;width:150px;height:150px;background:#f0f0f0;border:2px solid #79aaf4"></div>
<div class="a" style="left:380px;top:551px;width:146px;height:24px;background:#dedede"></div>
<div class="a nw" style="left:411px;top:557px;font-size:12px;color:#2a2a3a">Overall Health</div>
<div class="a" style="left:538px;top:549px;width:150px;height:150px;background:#f0f0f0;border:1px solid #cfcfcf"></div>
<div class="a" style="left:539px;top:550px;width:148px;height:25px;background:#dedede"></div>
<div class="a nw" style="left:570px;top:556px;font-size:12px;color:#2a2a3a">Process Health</div>
<div class="a" style="left:698px;top:549px;width:150px;height:150px;background:#f0f0f0;border:1px solid #cfcfcf"></div>
<div class="a" style="left:699px;top:550px;width:148px;height:25px;background:#dedede"></div>
<div class="a nw" style="left:730px;top:556px;font-size:12px;color:#2a2a3a">Tuning Health</div>
<div class="a" style="left:858px;top:549px;width:150px;height:150px;background:#f0f0f0;border:1px solid #cfcfcf"></div>
<div class="a" style="left:859px;top:550px;width:148px;height:25px;background:#dedede"></div>
<div class="a nw" style="left:890px;top:556px;font-size:12px;color:#2a2a3a">Mechanical ...</div>
<div class="a" style="left:1018px;top:549px;width:150px;height:150px;background:#f0f0f0;border:1px solid #cfcfcf"></div>
<div class="a" style="left:1019px;top:550px;width:148px;height:25px;background:#dedede"></div>
<div class="a" style="left:1019px;top:550px;width:5px;height:25px;background:#0b74c8"></div>
<div class="a nw" style="left:1050px;top:556px;font-size:12px;color:#2a2a3a">Percent Time...</div>
<div class="a" style="left:1178px;top:549px;width:150px;height:150px;background:#f0f0f0;border:1px solid #cfcfcf"></div>
<div class="a" style="left:1179px;top:550px;width:148px;height:25px;background:#dedede"></div>
<div class="a" style="left:1179px;top:550px;width:5px;height:25px;background:#0b74c8"></div>
<div class="a nw" style="left:1210px;top:556px;font-size:12px;color:#2a2a3a">Average Abs...</div>
<div class="a" style="left:1338px;top:549px;width:150px;height:150px;background:#f0f0f0;border:1px solid #cfcfcf"></div>
<div class="a" style="left:1339px;top:550px;width:148px;height:25px;background:#dedede"></div>
<div class="a" style="left:1339px;top:550px;width:5px;height:25px;background:#0b74c8"></div>
<div class="a nw" style="left:1370px;top:556px;font-size:12px;color:#2a2a3a">Output Distri...</div>
<div class="a" style="left:1498px;top:549px;width:150px;height:150px;background:#f0f0f0;border:1px solid #cfcfcf"></div>
<div class="a" style="left:1499px;top:550px;width:148px;height:25px;background:#dedede"></div>
<div class="a" style="left:1499px;top:550px;width:5px;height:25px;background:#0b74c8"></div>
<div class="a nw" style="left:1530px;top:556px;font-size:12px;color:#2a2a3a">Output Travel</div>
<div class="a" style="left:1658px;top:549px;width:150px;height:150px;background:#f0f0f0;border:1px solid #cfcfcf"></div>
<div class="a" style="left:1659px;top:550px;width:148px;height:25px;background:#dedede"></div>
<div class="a" style="left:1659px;top:550px;width:5px;height:25px;background:#0b74c8"></div>
<div class="a nw" style="left:1690px;top:556px;font-size:12px;color:#2a2a3a">Stiction</div>
<div class="a" style="left:378px;top:709px;width:150px;height:150px;background:#f0f0f0;border:1px solid #cfcfcf"></div>
<div class="a" style="left:379px;top:710px;width:148px;height:25px;background:#dedede"></div>
<div class="a" style="left:379px;top:710px;width:5px;height:25px;background:#0b74c8"></div>
<div class="a nw" style="left:410px;top:716px;font-size:12px;color:#2a2a3a">Output Reve...</div>
<div class="a" style="left:538px;top:709px;width:150px;height:150px;background:#f0f0f0;border:1px solid #cfcfcf"></div>
<div class="a" style="left:539px;top:710px;width:148px;height:25px;background:#dedede"></div>
<div class="a" style="left:539px;top:710px;width:5px;height:25px;background:#0b74c8"></div>
<div class="a nw" style="left:570px;top:716px;font-size:12px;color:#2a2a3a">Mode Changes</div>
<div class="a" style="left:698px;top:709px;width:150px;height:150px;background:#f0f0f0;border:1px solid #cfcfcf"></div>
<div class="a" style="left:699px;top:710px;width:148px;height:25px;background:#dedede"></div>
<div class="a" style="left:699px;top:710px;width:5px;height:25px;background:#7a7a7a"></div>
<div class="a nw" style="left:730px;top:716px;font-size:12px;color:#2a2a3a">Noise</div>
<div class="a" style="left:858px;top:709px;width:150px;height:150px;background:#f0f0f0;border:1px solid #cfcfcf"></div>
<div class="a" style="left:859px;top:710px;width:148px;height:25px;background:#dedede"></div>
<div class="a" style="left:859px;top:710px;width:5px;height:25px;background:#7a7a7a"></div>
<div class="a nw" style="left:890px;top:716px;font-size:12px;color:#2a2a3a">Uptime</div>
<div class="a" style="left:1018px;top:709px;width:150px;height:150px;background:#f0f0f0;border:1px solid #cfcfcf"></div>
<div class="a" style="left:1019px;top:710px;width:148px;height:25px;background:#dedede"></div>
<div class="a" style="left:1019px;top:710px;width:5px;height:25px;background:#0b74c8"></div>
<div class="a nw" style="left:1050px;top:716px;font-size:12px;color:#2a2a3a">Oscillation</div>
<div class="a" style="left:1178px;top:709px;width:150px;height:150px;background:#f0f0f0;border:1px solid #cfcfcf"></div>
<div class="a" style="left:1179px;top:710px;width:148px;height:25px;background:#dedede"></div>
<div class="a" style="left:1179px;top:710px;width:5px;height:25px;background:#7a7a7a"></div>
<div class="a nw" style="left:1210px;top:716px;font-size:12px;color:#2a2a3a">Setpoint Cha...</div>
<div class="a" style="left:1338px;top:709px;width:150px;height:150px;background:#f0f0f0;border:1px solid #cfcfcf"></div>
<div class="a" style="left:1339px;top:710px;width:148px;height:25px;background:#dedede"></div>
<div class="a nw" style="left:1370px;top:716px;font-size:12px;color:#2a2a3a">Process Data</div>
<div class="a" style="left:1498px;top:709px;width:150px;height:150px;background:#f0f0f0;border:1px solid #cfcfcf"></div>
<div class="a" style="left:1499px;top:710px;width:148px;height:25px;background:#dedede"></div>
<div class="a" style="left:1499px;top:710px;width:5px;height:25px;background:#7a7a7a"></div>
<div class="a nw" style="left:1530px;top:716px;font-size:12px;color:#2a2a3a">Tuning Devia...</div>
<div class="a" style="left:1658px;top:709px;width:150px;height:150px;background:#f0f0f0;border:1px solid #cfcfcf"></div>
<div class="a" style="left:1659px;top:710px;width:148px;height:25px;background:#dedede"></div>
<div class="a nw" style="left:1690px;top:716px;font-size:12px;color:#2a2a3a">Tuning Sugg...</div>
<svg class="a" style="left:0;top:0" width="1865" height="940"><path d="M402.70,651.50 A50.50,50.50 0 0 1 451.44,601.03 L451.65,607.03 A44.50,44.50 0 0 0 408.70,651.50 Z" fill="#f1dcdc"/><path d="M493.16,620.62 A50.50,50.50 0 0 1 503.70,651.50 L497.70,651.50 A44.50,44.50 0 0 0 488.41,624.29 Z" fill="#d3e6de"/><path d="M451.22,594.73 A56.80,56.80 0 0 1 498.14,616.77 L488.65,624.10 A44.80,44.80 0 0 0 451.64,606.73 Z" fill="#d5c22b" stroke="#7d6f1b" stroke-width="1"/><rect x="498.98" y="633.85" width="5.6" height="5.6" fill="#174a39" transform="rotate(28.0 501.78 636.65)"/><polygon points="496.91,611.87 500.78,599.75 509.34,609.19" fill="#d5c22b" stroke="#7d6f1b" stroke-width="0.8"/><path d="M562.70,651.50 A50.50,50.50 0 0 1 618.48,601.28 L617.85,607.24 A44.50,44.50 0 0 0 568.70,651.50 Z" fill="#f1dcdc"/><path d="M654.47,622.39 A50.50,50.50 0 0 1 663.70,651.50 L657.70,651.50 A44.50,44.50 0 0 0 649.56,625.85 Z" fill="#d3e6de"/><path d="M619.14,595.01 A56.80,56.80 0 0 1 659.61,618.76 L649.81,625.68 A44.80,44.80 0 0 0 617.88,606.95 Z" fill="#d5c22b" stroke="#7d6f1b" stroke-width="1"/><rect x="657.37" y="629.34" width="5.6" height="5.6" fill="#174a39" transform="rotate(22.6 660.17 632.14)"/><polygon points="636.25,597.19 634.69,584.57 646.42,589.54" fill="#d5c22b" stroke="#7d6f1b" stroke-width="0.8"/><path d="M722.70,651.50 A50.50,50.50 0 0 1 773.20,601.00 L773.20,607.00 A44.50,44.50 0 0 0 728.70,651.50 Z" fill="#f1dcdc"/><path d="M773.20,601.00 A50.50,50.50 0 0 1 811.02,618.04 L806.53,622.01 A44.50,44.50 0 0 0 773.20,607.00 Z" fill="#efecd4"/><path d="M815.74,613.86 A56.80,56.80 0 0 1 830.00,651.50 L818.00,651.50 A44.80,44.80 0 0 0 806.75,621.81 Z" fill="#2f9a73" stroke="#185c43" stroke-width="1"/><rect x="814.79" y="623.99" width="5.6" height="5.6" fill="#1f5843" transform="rotate(15.9 817.59 626.79)"/><polygon points="819.05,614.37 823.60,602.49 831.62,612.39" fill="#2f9a73" stroke="#185c43" stroke-width="0.8"/><path d="M882.70,651.50 A50.50,50.50 0 0 1 933.20,601.00 L933.20,607.00 A44.50,44.50 0 0 0 888.70,651.50 Z" fill="#f1dcdc"/><path d="M933.20,601.00 A50.50,50.50 0 0 1 970.91,617.91 L966.43,621.90 A44.50,44.50 0 0 0 933.20,607.00 Z" fill="#efecd4"/><path d="M975.61,613.71 A56.80,56.80 0 0 1 990.00,651.50 L978.00,651.50 A44.80,44.80 0 0 0 966.65,621.70 Z" fill="#2f9a73" stroke="#185c43" stroke-width="1"/><rect x="977.92" y="630.74" width="5.6" height="5.6" fill="#1f5843" transform="rotate(24.3 980.72 633.54)"/><polygon points="979.82,615.34 984.61,603.56 992.42,613.62" fill="#2f9a73" stroke="#185c43" stroke-width="0.8"/><path d="M1206.71,631.77 A50.50,50.50 0 0 1 1303.70,651.50 L1297.70,651.50 A44.50,44.50 0 0 0 1212.24,634.11 Z" fill="#f1dcdc"/><path d="M1204.20,639.28 A50.50,50.50 0 0 1 1206.71,631.77 L1212.24,634.11 A44.50,44.50 0 0 0 1210.02,640.73 Z" fill="#efecd4"/><path d="M1196.40,651.50 A56.80,56.80 0 0 1 1198.09,637.76 L1209.73,640.66 A44.80,44.80 0 0 0 1208.40,651.50 Z" fill="#2f9a73" stroke="#185c43" stroke-width="1"/><rect x="1202.60" y="631.49" width="5.6" height="5.6" fill="#6e6220" transform="rotate(-115.2 1205.40 634.29)"/><polygon points="1196.08,636.73 1183.82,640.14 1187.01,627.80" fill="#2f9a73" stroke="#185c43" stroke-width="0.8"/><path d="M1522.70,651.50 A50.50,50.50 0 0 1 1522.73,649.74 L1528.73,649.95 A44.50,44.50 0 0 0 1528.70,651.50 Z" fill="#f1dcdc"/><path d="M1522.73,649.74 A50.50,50.50 0 0 1 1526.71,631.77 L1532.24,634.11 A44.50,44.50 0 0 0 1528.73,649.95 Z" fill="#efecd4"/><path d="M1526.71,631.77 A50.50,50.50 0 0 1 1620.02,632.58 L1614.46,634.83 A44.50,44.50 0 0 0 1532.24,634.11 Z" fill="#d3e6de"/><path d="M1625.86,630.22 A56.80,56.80 0 0 1 1630.00,651.50 L1618.00,651.50 A44.80,44.80 0 0 0 1614.74,634.72 Z" fill="#d5c22b" stroke="#7d6f1b" stroke-width="1"/><rect x="1595.11" y="604.31" width="5.6" height="5.6" fill="#174a39" transform="rotate(-15.9 1597.91 607.11)"/><polygon points="1632.20,651.50 1643.21,645.13 1643.21,657.87" fill="#d5c22b" stroke="#7d6f1b" stroke-width="0.8"/><path d="M402.70,811.50 A50.50,50.50 0 0 1 502.41,800.14 L496.56,801.49 A44.50,44.50 0 0 0 408.70,811.50 Z" fill="#d3e6de"/><path d="M508.54,798.72 A56.80,56.80 0 0 1 510.00,811.50 L498.00,811.50 A44.80,44.80 0 0 0 496.85,801.42 Z" fill="#d5c22b" stroke="#7d6f1b" stroke-width="1"/><rect x="482.23" y="769.11" width="5.6" height="5.6" fill="#174a39" transform="rotate(-6.2 485.03 771.91)"/><polygon points="512.12,808.52 522.80,801.59 523.44,814.32" fill="#d5c22b" stroke="#7d6f1b" stroke-width="0.8"/><path d="M658.74,789.68 A50.50,50.50 0 0 1 663.70,811.50 L657.70,811.50 A44.50,44.50 0 0 0 653.33,792.27 Z" fill="#efecd4"/><path d="M556.40,811.50 A56.80,56.80 0 0 1 664.42,786.96 L653.60,792.14 A44.80,44.80 0 0 0 568.40,811.50 Z" fill="#2f9a73" stroke="#185c43" stroke-width="1"/><rect x="561.11" y="796.41" width="5.6" height="5.6" fill="#1f5843" transform="rotate(-121.0 563.91 799.21)"/><polygon points="554.20,811.50 543.19,817.87 543.19,805.13" fill="#2f9a73" stroke="#185c43" stroke-width="0.8"/><path d="M722.70,811.50 A50.50,50.50 0 0 1 809.53,776.42 L805.21,780.59 A44.50,44.50 0 0 0 728.70,811.50 Z" fill="#d3e6de"/><path d="M809.53,776.42 A50.50,50.50 0 0 1 823.63,808.86 L817.64,809.17 A44.50,44.50 0 0 0 805.21,780.59 Z" fill="#efecd4"/><path d="M829.92,808.53 A56.80,56.80 0 0 1 830.00,811.50 L818.00,811.50 A44.80,44.80 0 0 0 817.94,809.16 Z" fill="#d95c5e" stroke="#8e3b3d" stroke-width="1"/><rect x="777.56" y="758.41" width="5.6" height="5.6" fill="#174a39" transform="rotate(-36.9 780.36 761.21)"/><polygon points="832.20,811.50 843.21,805.13 843.21,817.87" fill="#d95c5e" stroke="#8e3b3d" stroke-width="0.8"/><path d="M882.70,811.50 A50.50,50.50 0 0 1 983.51,807.10 L977.53,807.62 A44.50,44.50 0 0 0 888.70,811.50 Z" fill="#f1dcdc"/><path d="M983.51,807.10 A50.50,50.50 0 0 1 983.65,809.30 L977.66,809.56 A44.50,44.50 0 0 0 977.53,807.62 Z" fill="#efecd4"/><path d="M989.95,809.02 A56.80,56.80 0 0 1 990.00,811.50 L978.00,811.50 A44.80,44.80 0 0 0 977.96,809.55 Z" fill="#2f9a73" stroke="#185c43" stroke-width="1"/><rect x="981.15" y="806.40" width="5.6" height="5.6" fill="#1f5843" transform="rotate(42.4 983.95 809.20)"/><polygon points="992.20,811.50 1003.21,805.13 1003.21,817.87" fill="#2f9a73" stroke="#185c43" stroke-width="0.8"/><path d="M1042.70,811.50 A50.50,50.50 0 0 1 1079.28,762.96 L1080.93,768.72 A44.50,44.50 0 0 0 1048.70,811.50 Z" fill="#d3e6de"/><path d="M1079.28,762.96 A50.50,50.50 0 0 1 1120.70,769.15 L1117.44,774.18 A44.50,44.50 0 0 0 1080.93,768.72 Z" fill="#efecd4"/><path d="M1124.14,763.86 A56.80,56.80 0 0 1 1150.00,811.50 L1138.00,811.50 A44.80,44.80 0 0 0 1117.60,773.93 Z" fill="#d95c5e" stroke="#8e3b3d" stroke-width="1"/><rect x="1059.26" y="768.56" width="5.6" height="5.6" fill="#174a39" transform="rotate(-82.8 1062.06 771.36)"/><polygon points="1150.32,796.73 1159.39,787.80 1162.58,800.14" fill="#d95c5e" stroke="#8e3b3d" stroke-width="0.8"/><path d="M1196.40,811.50 A56.80,56.80 0 0 1 1310.00,811.50 L1298.00,811.50 A44.80,44.80 0 0 0 1208.40,811.50 Z" fill="#2f9a73" stroke="#185c43" stroke-width="1"/><rect x="1202.14" y="792.83" width="5.6" height="5.6" fill="#1f5843" transform="rotate(-116.8 1204.94 795.63)"/><polygon points="1223.70,760.40 1212.68,754.05 1223.71,747.68" fill="#2f9a73" stroke="#185c43" stroke-width="0.8"/><path d="M1522.70,811.50 A50.50,50.50 0 0 1 1571.44,761.03 L1571.65,767.03 A44.50,44.50 0 0 0 1528.70,811.50 Z" fill="#d3e6de"/><path d="M1623.51,807.10 A50.50,50.50 0 0 1 1623.70,811.50 L1617.70,811.50 A44.50,44.50 0 0 0 1617.53,807.62 Z" fill="#f1dcdc"/><path d="M1571.22,754.73 A56.80,56.80 0 0 1 1629.78,806.55 L1617.83,807.60 A44.80,44.80 0 0 0 1571.64,766.73 Z" fill="#d5c22b" stroke="#7d6f1b" stroke-width="1"/><rect x="1601.61" y="768.61" width="5.6" height="5.6" fill="#5a5018" transform="rotate(-7.1 1604.41 771.41)"/><polygon points="1612.68,767.65 1615.31,755.21 1624.78,763.74" fill="#d5c22b" stroke="#7d6f1b" stroke-width="0.8"/></svg>
<div class="a nw" style="left:378px;top:620px;width:150px;text-align:center;font-size:22px;color:#725a14">72.3</div>
<div class="a nw" style="left:378px;top:649px;width:150px;text-align:center;font-size:14px;color:#725a14">%</div>
<div class="a nw" style="left:378px;top:669px;width:150px;text-align:center;font-size:14px;color:#223d4c">Avg:86.1</div>
<div class="a nw" style="left:538px;top:621px;width:150px;text-align:center;font-size:22px;color:#725a14">58.9</div>
<div class="a nw" style="left:538px;top:649px;width:150px;text-align:center;font-size:14px;color:#725a14">%</div>
<div class="a nw" style="left:538px;top:670px;width:150px;text-align:center;font-size:14px;color:#223d4c">Avg:81.8</div>
<div class="a nw" style="left:698px;top:621px;width:150px;text-align:center;font-size:22px;color:#1c4a3c">77</div>
<div class="a nw" style="left:698px;top:649px;width:150px;text-align:center;font-size:14px;color:#223d4c">%</div>
<div class="a nw" style="left:698px;top:670px;width:150px;text-align:center;font-size:14px;color:#223d4c">Avg:82.1</div>
<div class="a nw" style="left:858px;top:621px;width:150px;text-align:center;font-size:22px;color:#1c4a3c">77.7</div>
<div class="a nw" style="left:858px;top:649px;width:150px;text-align:center;font-size:14px;color:#223d4c">%</div>
<div class="a nw" style="left:858px;top:670px;width:150px;text-align:center;font-size:14px;color:#223d4c">Avg:87.1</div>
<div class="a nw" style="left:1178px;top:621px;width:150px;text-align:center;font-size:22px;color:#1c4a3c">0.0367</div>
<div class="a nw" style="left:1178px;top:649px;width:150px;text-align:center;font-size:14px;color:#223d4c">m3/hr</div>
<div class="a nw" style="left:1178px;top:670px;width:150px;text-align:center;font-size:14px;color:#725a14">Avg:0.0499</div>
<div class="a nw" style="left:1498px;top:621px;width:150px;text-align:center;font-size:22px;color:#725a14">0.762</div>
<div class="a nw" style="left:1498px;top:649px;width:150px;text-align:center;font-size:14px;color:#725a14">100%/hr</div>
<div class="a nw" style="left:1498px;top:670px;width:150px;text-align:center;font-size:14px;color:#223d4c">Avg:0.505</div>
<div class="a nw" style="left:378px;top:781px;width:150px;text-align:center;font-size:22px;color:#725a14">378</div>
<div class="a nw" style="left:378px;top:809px;width:150px;text-align:center;font-size:14px;color:#725a14">per hour</div>
<div class="a nw" style="left:378px;top:830px;width:150px;text-align:center;font-size:14px;color:#223d4c">Avg:275</div>
<div class="a nw" style="left:538px;top:781px;width:150px;text-align:center;font-size:22px;color:#1c4a3c">0</div>
<div class="a nw" style="left:538px;top:809px;width:150px;text-align:center;font-size:14px;color:#223d4c">per hour</div>
<div class="a nw" style="left:538px;top:830px;width:150px;text-align:center;font-size:14px;color:#223d4c">Avg:0.0411</div>
<div class="a nw" style="left:698px;top:781px;width:150px;text-align:center;font-size:22px;color:#6b2830">0.0114</div>
<div class="a nw" style="left:698px;top:809px;width:150px;text-align:center;font-size:14px;color:#6b2830">m3/hr</div>
<div class="a nw" style="left:698px;top:830px;width:150px;text-align:center;font-size:14px;color:#223d4c">Avg:0.00621</div>
<div class="a nw" style="left:858px;top:781px;width:150px;text-align:center;font-size:22px;color:#1c4a3c">100</div>
<div class="a nw" style="left:858px;top:809px;width:150px;text-align:center;font-size:14px;color:#223d4c">%</div>
<div class="a nw" style="left:858px;top:830px;width:150px;text-align:center;font-size:14px;color:#223d4c">Avg:98.3</div>
<div class="a nw" style="left:1018px;top:781px;width:150px;text-align:center;font-size:22px;color:#6b2830">67.6</div>
<div class="a nw" style="left:1018px;top:809px;width:150px;text-align:center;font-size:14px;color:#6b2830">%</div>
<div class="a nw" style="left:1018px;top:830px;width:150px;text-align:center;font-size:14px;color:#223d4c">Avg:21.4</div>
<div class="a nw" style="left:1178px;top:781px;width:150px;text-align:center;font-size:22px;color:#725a14">1</div>
<div class="a nw" style="left:1178px;top:809px;width:150px;text-align:center;font-size:14px;color:#223d4c">per day</div>
<div class="a nw" style="left:1178px;top:830px;width:150px;text-align:center;font-size:14px;color:#223d4c">Avg:0.307</div>
<div class="a nw" style="left:1498px;top:781px;width:150px;text-align:center;font-size:22px;color:#725a14">1.51</div>
<div class="a nw" style="left:1498px;top:830px;width:150px;text-align:center;font-size:14px;color:#725a14">Avg:1.47</div>
<div class="a" style="left:1024px;top:614px;width:121px;height:18px;background:#5aab8a"></div>
<div class="a nw" style="left:1024px;top:577.9px;font-size:12px;color:#111;font-weight:bold;font-style:italic;">Automatic</div>
<div class="a nw" style="left:1043px;width:100px;text-align:right;top:577.9px;font-size:12px;color:#111">0.0%</div>
<div class="a nw" style="left:1024px;top:596.8px;font-size:12px;color:#111;">Backup Cas...</div>
<div class="a nw" style="left:1043px;width:100px;text-align:right;top:596.8px;font-size:12px;color:#111">0.0%</div>
<div class="a nw" style="left:1024px;top:615.2px;font-size:12px;color:#111;font-weight:bold;font-style:italic;">Cascade</div>
<div class="a nw" style="left:1043px;width:100px;text-align:right;top:615.2px;font-size:12px;color:#111">100.0%</div>
<div class="a nw" style="left:1024px;top:632.8px;font-size:12px;color:#111;">Error</div>
<div class="a nw" style="left:1043px;width:100px;text-align:right;top:632.8px;font-size:12px;color:#111">0.0%</div>
<div class="a nw" style="left:1024px;top:651.2px;font-size:12px;color:#111;">Manual</div>
<div class="a nw" style="left:1043px;width:100px;text-align:right;top:651.2px;font-size:12px;color:#111">0.0%</div>
<div class="a nw" style="left:1024px;top:668.8px;font-size:12px;color:#111;">Normal</div>
<div class="a nw" style="left:1043px;width:100px;text-align:right;top:668.8px;font-size:12px;color:#111">0.0%</div>
<svg class="a" style="left:1147px;top:580px" width="14" height="114"><polygon points="1,9 11,9 6,4" fill="#b5b5b5"/><polygon points="1,105 11,105 6,110" fill="#b5b5b5"/></svg>
<svg class="a" style="left:0;top:0" width="1865" height="940"><rect x="1371.8" y="582.2" width="108.8" height="108.8" fill="#5db394"/><rect x="1371.8" y="582.2" width="108.8" height="5.5" fill="#df8585"/><rect x="1371.8" y="582.2" width="57.7" height="5.5" fill="#f8e6e6"/><rect x="1371.8" y="587.7" width="108.8" height="10.9" fill="#dccf5e"/><rect x="1371.8" y="587.7" width="19.2" height="5.5" fill="#f6f1dc"/><rect x="1371.8" y="593.2" width="25.1" height="5.4" fill="#f6f1dc"/><rect x="1371.8" y="674.8" width="108.8" height="10.9" fill="#dccf5e"/><rect x="1371.8" y="685.7" width="108.8" height="5.3" fill="#df8585"/><rect x="1371.8" y="582.2" width="108.8" height="108.8" fill="none" stroke="#a9a9a9" stroke-width="1.6"/><text x="1368.5" y="587.5" font-size="9.2" fill="#222" text-anchor="end">100</text><text x="1368.5" y="692" font-size="9.2" fill="#222" text-anchor="end">0</text><text x="1344" y="640" font-size="10" fill="#333">%</text><text x="1695.1" y="585.5" font-size="9.5" fill="#222" text-anchor="middle">Likelihood</text><text x="1769.6" y="585.5" font-size="9.5" fill="#222" text-anchor="middle">Amount</text><text x="1675" y="597" font-size="7" fill="#888" text-anchor="middle">100</text><text x="1751.5" y="597" font-size="7" fill="#888" text-anchor="middle">10</text><rect x="1691.8" y="593" width="7.2" height="54" fill="#efcaca"/><rect x="1691.8" y="647" width="7.2" height="9" fill="#ede2b8"/><rect x="1688.4" y="656.4" width="13.4" height="20.9" fill="#2f9a73" stroke="#1f6a50" stroke-width="0.7"/><polygon points="1675,667.2 1675,681.5 1686.7,674" fill="#2f9a73" stroke="#1f6a50" stroke-width="0.7"/><rect x="1766.3" y="593" width="6.7" height="76" fill="#ede2b8"/><rect x="1762.6" y="668.9" width="13.4" height="8.4" fill="#2f9a73" stroke="#1f6a50" stroke-width="0.7"/><polygon points="1749.2,667.2 1749.2,681.5 1761.2,674" fill="#2f9a73" stroke="#1f6a50" stroke-width="0.7"/><text x="1695.1" y="690" font-size="10.5" fill="#111" text-anchor="middle">0%</text><text x="1769.6" y="690" font-size="10.5" fill="#111" text-anchor="middle">0%</text><text x="1363.0" y="752" font-size="9" fill="#333" text-anchor="middle">PV</text><rect x="1359.8" y="758.6" width="6.4" height="4" fill="#f1c9c9"/><rect x="1359.8" y="768.6" width="6.4" height="52" fill="#bfdfd3"/><rect x="1359.8" y="820.5" width="6.4" height="8.4" fill="#eee3b6"/><rect x="1359.8" y="828.9" width="6.4" height="3.4" fill="#f1c9c9"/><rect x="1357.3" y="762.3" width="11.4" height="6.8" fill="#d5c22b" stroke="#7d6f1b" stroke-width="0.7"/><rect x="1361.5" y="765.3" width="3" height="0.8" fill="#7d6f1b"/><polygon points="1345.0,756.6 1345.0,768.6 1355.4,762.8" fill="#d5c22b" stroke="#7d6f1b" stroke-width="0.7"/><text x="1343.5" y="762" font-size="7" fill="#888" text-anchor="middle">7</text><text x="1346.0" y="833" font-size="7" fill="#555" text-anchor="middle">-10</text><text x="1363.0" y="843" font-size="9.0" fill="#555" text-anchor="middle" letter-spacing="-0.2">5.47m3/hr</text><text x="1412.5" y="752" font-size="9" fill="#333" text-anchor="middle">SP</text><rect x="1409.3" y="758.6" width="6.4" height="4" fill="#f1c9c9"/><rect x="1409.3" y="768.6" width="6.4" height="52" fill="#bfdfd3"/><rect x="1409.3" y="820.5" width="6.4" height="8.4" fill="#eee3b6"/><rect x="1409.3" y="828.9" width="6.4" height="3.4" fill="#f1c9c9"/><rect x="1406.8" y="762.3" width="11.4" height="6.8" fill="#d5c22b" stroke="#7d6f1b" stroke-width="0.7"/><rect x="1411.0" y="765.3" width="3" height="0.8" fill="#7d6f1b"/><polygon points="1394.5,756.6 1394.5,768.6 1404.9,762.8" fill="#d5c22b" stroke="#7d6f1b" stroke-width="0.7"/><text x="1393.0" y="762" font-size="7" fill="#888" text-anchor="middle">7</text><text x="1395.5" y="833" font-size="7" fill="#555" text-anchor="middle">-10</text><text x="1412.5" y="843" font-size="9.0" fill="#555" text-anchor="middle" letter-spacing="-0.2">5.47m3/hr</text><text x="1462.0" y="752" font-size="9" fill="#333" text-anchor="middle">CO</text><rect x="1458.8" y="758.6" width="6.4" height="4" fill="#f1c9c9"/><rect x="1458.8" y="768.6" width="6.4" height="52" fill="#bfdfd3"/><rect x="1458.8" y="820.5" width="6.4" height="8.4" fill="#eee3b6"/><rect x="1458.8" y="828.9" width="6.4" height="3.4" fill="#f1c9c9"/><rect x="1456.3" y="762.3" width="11.4" height="6.8" fill="#d5c22b" stroke="#7d6f1b" stroke-width="0.7"/><rect x="1460.9" y="758.6" width="2.6" height="15" fill="#333" opacity="0.75"/><polygon points="1444.2,754.4 1444.2,767 1454.7,760.6" fill="#d5c22b" stroke="#7d6f1b" stroke-width="0.7"/><text x="1440.0" y="762" font-size="7" fill="#888" text-anchor="middle">10</text><text x="1447.0" y="833" font-size="7" fill="#555" text-anchor="middle">0</text><text x="1462.0" y="843" font-size="10.5" fill="#111" text-anchor="middle" letter-spacing="-0.2">93.0%</text><text x="1676" y="773" font-size="15" fill="#2b2b9a">P: 3.03</text><text x="1679" y="801" font-size="15" fill="#c9b932">I: 1.86</text><line x1="1741" y1="767.7" x2="1796" y2="767.7" stroke="#dcdcdc" stroke-width="1.6"/><line x1="1741" y1="796.2" x2="1796" y2="796.2" stroke="#dcdcdc" stroke-width="1.6"/><rect x="1741.7" y="765.2" width="5" height="5" fill="#f00" transform="rotate(45 1744.2 767.7)"/><polygon points="1748.2,762 1748.2,774.2 1758.4,767.7" fill="#0000e0"/><circle cx="1767.6" cy="767.7" r="3.2" fill="#0000e0"/><polygon points="1787.3,762 1787.3,774.2 1777.1,767.7" fill="#0000e0"/><polygon points="1749.2,790 1749.2,802.4 1740.2,796.2" fill="#f2ee00" stroke="#d8d000" stroke-width="0.5"/><circle cx="1767.6" cy="796.2" r="2.8" fill="#f2ee00" stroke="#c8c000" stroke-width="0.8"/><rect x="1775.6" y="793.9" width="4.6" height="4.6" fill="#008000" transform="rotate(45 1777.9 796.2)"/><polygon points="1786.3,790 1786.3,802.4 1796,796.2" fill="#f2ee00" stroke="#d8d000" stroke-width="0.5"/><polygon points="1670.60,834.00 1672.57,839.28 1678.21,839.53 1673.80,843.04 1675.30,848.47 1670.60,845.36 1665.90,848.47 1667.40,843.04 1662.99,839.53 1668.63,839.28" fill="#ffb947"/><polygon points="1690.10,834.00 1692.07,839.28 1697.71,839.53 1693.30,843.04 1694.80,848.47 1690.10,845.36 1685.40,848.47 1686.90,843.04 1682.49,839.53 1688.13,839.28" fill="#ffb947"/><polygon points="1709.10,834.00 1711.07,839.28 1716.71,839.53 1712.30,843.04 1713.80,848.47 1709.10,845.36 1704.40,848.47 1705.90,843.04 1701.49,839.53 1707.13,839.28" fill="#ffb947"/><polygon points="1728.20,834.00 1730.17,839.28 1735.81,839.53 1731.40,843.04 1732.90,848.47 1728.20,845.36 1723.50,848.47 1725.00,843.04 1720.59,839.53 1726.23,839.28" fill="none" stroke="#ffb947" stroke-width="1.1"/><polygon points="1747.60,834.00 1749.57,839.28 1755.21,839.53 1750.80,843.04 1752.30,848.47 1747.60,845.36 1742.90,848.47 1744.40,843.04 1739.99,839.53 1745.63,839.28" fill="none" stroke="#ffb947" stroke-width="1.1"/><text x="1786" y="848" font-size="15" fill="#222">46</text></svg>
<svg class="a" style="left:1830px;top:540px" width="20" height="340"><polygon points="6,11 14,11 10,6" fill="#a8a8a8"/><polygon points="6,327 14,327 10,332" fill="#555"/></svg>
<div class="a" style="left:1834px;top:556px;width:13px;height:298px;background:#bdbdbd"></div>
<div class="a" style="left:385px;top:882px;width:1425px;height:13px;background:#c1c1c1"></div>
<svg class="a" style="left:368px;top:880px" width="1470" height="17"><polygon points="10,8.5 5,5 5,12" fill="#999" transform="rotate(180 7.5 8.5)"/><polygon points="1453,5 1453,12 1458,8.5" fill="#333"/></svg>
<div class="a" style="left:1832px;top:880px;width:17px;height:17px;background:#e0e0e0"></div>
<svg class="a" style="left:0;top:0" width="1865" height="940"><defs><linearGradient id="gg1" x1="0" x2="1" y1="0" y2="0"><stop offset="0" stop-color="#f04848"/><stop offset="0.5" stop-color="#a05a48"/><stop offset="1" stop-color="#2e9a6a"/></linearGradient></defs><path d="M334.38,530.08 A9.60,9.60 0 1 1 352.42,530.08" fill="none" stroke="url(#gg1)" stroke-width="1.6"/><line x1="338.14" y1="524.88" x2="336.54" y2="524.30" stroke="#c85050" stroke-width="1.1"/><line x1="339.11" y1="523.20" x2="337.81" y2="522.11" stroke="#b85a50" stroke-width="1.1"/><line x1="341.03" y1="521.72" x2="340.31" y2="520.18" stroke="#a06050" stroke-width="1.1"/><line x1="343.40" y1="521.20" x2="343.40" y2="519.50" stroke="#8a6a50" stroke-width="1.1"/><line x1="345.77" y1="521.72" x2="346.49" y2="520.18" stroke="#6a7a55" stroke-width="1.1"/><line x1="347.69" y1="523.20" x2="348.99" y2="522.11" stroke="#4a8a5a" stroke-width="1.1"/><line x1="348.66" y1="524.88" x2="350.26" y2="524.30" stroke="#3a9060" stroke-width="1.1"/><polygon points="341.80,530.80 343.40,524.20 345.00,530.80 343.40,532.40" fill="#8a6050"/><defs><linearGradient id="gg2" x1="0" x2="1" y1="0" y2="0"><stop offset="0" stop-color="#f04848"/><stop offset="0.5" stop-color="#a05a48"/><stop offset="1" stop-color="#2e9a6a"/></linearGradient></defs><path d="M375.58,526.88 A9.60,9.60 0 1 1 393.62,526.88" fill="none" stroke="url(#gg2)" stroke-width="1.6"/><line x1="379.34" y1="521.68" x2="377.74" y2="521.10" stroke="#c85050" stroke-width="1.1"/><line x1="380.31" y1="520.00" x2="379.01" y2="518.91" stroke="#b85a50" stroke-width="1.1"/><line x1="382.23" y1="518.52" x2="381.51" y2="516.98" stroke="#a06050" stroke-width="1.1"/><line x1="384.60" y1="518.00" x2="384.60" y2="516.30" stroke="#8a6a50" stroke-width="1.1"/><line x1="386.97" y1="518.52" x2="387.69" y2="516.98" stroke="#6a7a55" stroke-width="1.1"/><line x1="388.89" y1="520.00" x2="390.19" y2="518.91" stroke="#4a8a5a" stroke-width="1.1"/><line x1="389.86" y1="521.68" x2="391.46" y2="521.10" stroke="#3a9060" stroke-width="1.1"/><polygon points="383.00,527.60 384.60,521.00 386.20,527.60 384.60,529.20" fill="#8a6050"/><polygon points="343.40,557.00 335.35,561.65 335.35,570.95 343.40,575.60 351.45,570.95 351.45,561.65" fill="none" stroke="#2d65a3" stroke-width="1.5"/><polygon points="343.40,561.00 338.81,563.65 338.81,568.95 343.40,571.60 347.99,568.95 347.99,563.65" fill="none" stroke="#2d65a3" stroke-width="1.3"/><polyline points="338.80,563.65 343.40,566.30 348.00,563.65" fill="none" stroke="#2d65a3" stroke-width="1.2"/><line x1="343.40" y1="566.30" x2="343.40" y2="571.60" stroke="#2d65a3" stroke-width="1.2"/><polygon points="343.5,600.5 334,617.3 353,617.3" fill="none" stroke="#f7804e" stroke-width="1.5" stroke-linejoin="miter"/><rect x="342.8" y="605.5" width="1.4" height="6" fill="#f7804e"/><rect x="342.8" y="613" width="1.4" height="1.5" fill="#f7804e"/><path d="M337.5,643 H335.3 V660.5 H352 V643 H349.5" fill="none" stroke="#da9418" stroke-width="1.5"/><path d="M338.5,645 V642.8 H341.3 Q343.5,639 345.7,642.8 H348.5 V645 Z" fill="#da9418"/><rect x="338.5" y="649" width="10" height="1.8" fill="#dcb060"/><rect x="338.5" y="652.3" width="10" height="1.2" fill="#da9418"/><rect x="338.5" y="655.2" width="10" height="1.2" fill="#da9418"/><circle cx="343.5" cy="688" r="5" fill="none" stroke="#1f4fc6" stroke-width="1.6"/><polygon points="343.50,685.50 344.15,687.11 345.88,687.23 344.55,688.34 344.97,690.02 343.50,689.10 342.03,690.02 342.45,688.34 341.12,687.23 342.85,687.11" fill="#1f4fc6"/><path d="M339.5,692.5 L336.5,701 L338.8,700 L340,702 L342.2,694 M347.5,692.5 L350.5,701 L348.2,700 L347,702 L344.8,694" fill="none" stroke="#1f4fc6" stroke-width="1.5"/><path d="M1764.2,522.1 Q1773.4,511.5 1782.6,522.1 Q1773.4,532.7 1764.2,522.1 Z" fill="none" stroke="#666" stroke-width="1.1"/><circle cx="1773.4" cy="522.1" r="2.8" fill="#666"/><rect x="1793.6" y="513.4" width="17.8" height="17" rx="3.5" fill="none" stroke="#555" stroke-width="1.2"/><polyline points="1795.5,516.5 1796.8,517.8 1798.8,515.2" fill="none" stroke="#555" stroke-width="0.8"/><polyline points="1795.5,520.5 1796.8,521.8 1798.8,519.2" fill="none" stroke="#555" stroke-width="0.8"/><polyline points="1795.5,524.5 1796.8,525.8 1798.8,523.2" fill="none" stroke="#555" stroke-width="0.8"/><rect x="1801" y="516.4" width="7.5" height="1" fill="#555"/><rect x="1801" y="520.6" width="7.5" height="1.3" fill="#999"/><rect x="1801.5" y="523" width="10" height="9" fill="#f0f0f0"/><path d="M1803.2,526.6 A3.4,3.4 0 0 1 1809.8,526 M1809.8,528.4 A3.4,3.4 0 0 1 1803.2,529" fill="none" stroke="#555" stroke-width="1.1"/><rect x="1822.3" y="513.2" width="8.6" height="8.5" fill="#666"/><rect x="1835.2" y="525.2" width="4.9" height="4.1" fill="#666"/><path d="M1833.4,515 Q1837.5,516 1837.6,520.5" fill="none" stroke="#666" stroke-width="1.4"/><polygon points="1835.6,520 1839.6,520 1837.6,522.5" fill="#666"/><path d="M1830,531.4 Q1826,530.5 1826,526" fill="none" stroke="#666" stroke-width="1.4"/><polygon points="1824,526.5 1828,526.5 1826,524" fill="#666"/><g transform="translate(385.0 550.0)"><path d="M13.40,22.90 L6.36,15.72 C4.60,13.49 4.60,7.85 9.35,5.80 C11.99,5.80 13.40,6.65 13.40,8.54 C13.40,6.65 14.81,5.80 17.45,5.80 C22.20,7.85 22.20,13.49 20.44,15.72 Z" fill="#474c4f"/><polyline points="6.2,14.3 10.2,14.3 11.3,13.4 12.6,14.8 13.4,9.8 14.2,18.2 15.6,13.9 18.8,13.9" fill="none" stroke="#e6e6e6" stroke-width="0.9"/></g><g transform="translate(545.0 550.0)"><rect x="6" y="5" width="1.9" height="15.7" fill="#474c4f"/><rect x="6" y="19" width="9.5" height="1.8" fill="#474c4f"/><rect x="7.8" y="11.9" width="13" height="0.9" fill="#474c4f"/><rect x="8.6" y="9.2" width="1.3" height="3.0" fill="#474c4f"/><rect x="10.9" y="9.2" width="1.3" height="3.0" fill="#474c4f"/><rect x="13.0" y="8.2" width="1.3" height="4.0" fill="#474c4f"/><rect x="15.2" y="9.2" width="1.3" height="3.0" fill="#474c4f"/><rect x="17.0" y="8.2" width="1.3" height="4.0" fill="#474c4f"/><rect x="14.4" y="13.4" width="7.2" height="7.2" fill="#dedede"/><path d="M17.20,20.20 L14.32,17.64 C13.60,16.84 13.60,14.83 15.54,14.10 C16.62,14.10 17.20,14.40 17.20,15.08 C17.20,14.40 17.78,14.10 18.86,14.10 C20.80,14.83 20.80,16.84 20.08,17.64 Z" fill="#474c4f"/></g><g transform="translate(700.0 550.0)"><circle cx="11" cy="20.1" r="1.9" fill="#474c4f"/><line x1="11" y1="20.1" x2="15.9" y2="15.4" stroke="#474c4f" stroke-width="1.9"/><line x1="15.1" y1="14.6" x2="22" y2="6.8" stroke="#474c4f" stroke-width="1.9"/><line x1="22" y1="12" x2="24.8" y2="9.4" stroke="#474c4f" stroke-width="1.9"/><path d="M14.4,15.6 L15.9,14.6" stroke="#474c4f" stroke-width="2.4"/><path d="M22.40,20.90 L18.80,17.54 C17.90,16.50 17.90,13.86 20.33,12.90 C21.68,12.90 22.40,13.30 22.40,14.18 C22.40,13.30 23.12,12.90 24.47,12.90 C26.90,13.86 26.90,16.50 26.00,17.54 Z" fill="#f4f4f4" stroke="#f4f4f4" stroke-width="1.4"/><path d="M22.40,20.20 L19.36,17.43 C18.60,16.57 18.60,14.39 20.65,13.60 C21.79,13.60 22.40,13.93 22.40,14.66 C22.40,13.93 23.01,13.60 24.15,13.60 C26.20,14.39 26.20,16.57 25.44,17.43 Z" fill="#474c4f"/></g><g transform="translate(860.0 550.0)"><path d="M9.4,11.4 V20 L13.5,18.2 V13.3 Z M25.7,11.4 V20 L21.9,18.2 V13.3 Z" fill="none" stroke="#474c4f" stroke-width="1.4"/><path d="M14,9.8 A3.5,3.3 0 0 1 21,9.8 Z" fill="none" stroke="#474c4f" stroke-width="1.4"/><line x1="17.5" y1="9.8" x2="17.5" y2="13" stroke="#474c4f" stroke-width="1.3"/><path d="M18.15,20.80 L14.75,17.40 C13.90,16.35 13.90,13.67 16.20,12.70 C17.47,12.70 18.15,13.11 18.15,14.00 C18.15,13.11 18.83,12.70 20.11,12.70 C22.40,13.67 22.40,16.35 21.55,17.40 Z" fill="#f4f4f4" stroke="#f4f4f4" stroke-width="1.4"/><path d="M18.15,20.10 L15.31,17.29 C14.60,16.41 14.60,14.20 16.52,13.40 C17.58,13.40 18.15,13.74 18.15,14.47 C18.15,13.74 18.72,13.40 19.78,13.40 C21.70,14.20 21.70,16.41 20.99,17.29 Z" fill="#474c4f"/></g><g transform="translate(1020.0 550.0)"><circle cx="14.6" cy="7.9" r="2.3" fill="none" stroke="#474c4f" stroke-width="1.7"/><circle cx="20.9" cy="18.8" r="2.3" fill="none" stroke="#474c4f" stroke-width="1.7"/><line x1="11.4" y1="20" x2="24.2" y2="6.8" stroke="#474c4f" stroke-width="1.9" stroke-linecap="round"/></g><g transform="translate(1180.0 550.0)"><path d="M13.3,14.4 Q15,9.2 17.4,9.2 Q19.8,9.2 21.5,14.4 Z" fill="#999"/><path d="M9.4,14.4 H12.6 Q11.5,19 9.4,20.3 Z M25.7,14.4 H22.3 Q23.4,19 25.7,20.3 Z" fill="#999"/><path d="M9.4,5 V21.3 H25.7 M9.4,14.4 H25.8 M9.4,20.3 Q12,18.5 13.5,13.8 Q15,9.2 17.4,9.2 Q19.8,9.2 21.3,13.8 Q22.8,18.5 25.7,20.3" fill="none" stroke="#5a5f62" stroke-width="1.2"/></g><g transform="translate(1340.0 550.0)"><path d="M11,18.3 Q15,8 17.4,8 Q19.8,8 23.8,18.3 Z" fill="#474c4f"/><rect x="9.1" y="20.1" width="16.6" height="1.1" fill="#888"/></g><g transform="translate(1500.0 550.0)"><path d="M14.1,9.5 V7.6 Q14.1,6.8 15,6.8 H20.1 Q21,6.8 21,7.6 V9.5" fill="none" stroke="#474c4f" stroke-width="1.6"/><path d="M9.1,11.8 V10.3 Q9.1,9.1 10.5,9.1 H24.5 Q25.9,9.1 25.9,10.3 V11.8 Z" fill="#474c4f"/><path d="M9.1,13.3 H25.9 V19 Q25.9,20.1 24.6,20.1 H10.4 Q9.1,20.1 9.1,19 Z" fill="#474c4f"/></g><g transform="translate(1660.0 550.0)"><path d="M9.4,12.1 V20.3 L25.6,12.1 V20.3 Z" fill="none" stroke="#474c4f" stroke-width="1.2" stroke-linejoin="round"/><path d="M14,10 A3.7,3.3 0 0 1 21.4,10 Z" fill="none" stroke="#474c4f" stroke-width="1.2"/><line x1="17.5" y1="10" x2="17.5" y2="16.2" stroke="#474c4f" stroke-width="1.2"/></g><g transform="translate(380.0 710.0)"><path d="M10.4,21.7 V12.5 Q10.4,7.4 15.7,7.4 Q21,7.4 21,12.8 V15.5" fill="none" stroke="#474c4f" stroke-width="2.8"/><polygon points="16.9,14.9 25.5,14.9 21.3,20.4" fill="#474c4f"/></g><g transform="translate(540.0 710.0)"><path d="M9.1,14.7 H12.7 Q14.6,14.7 15.8,12.6 L17.6,11" fill="none" stroke="#474c4f" stroke-width="1.8"/><circle cx="17.8" cy="11.2" r="2" fill="#474c4f"/><circle cx="22.8" cy="14.6" r="2.1" fill="#474c4f"/><rect x="22.8" y="13.6" width="3.2" height="2" fill="#474c4f"/></g><g transform="translate(700.0 710.0)"><polyline points="9.1,13.3 10.8,13.2 11.6,9.6 13.4,17.4 15.3,11.3 17.4,21.5 20.4,5.4 22.4,18.6 23.6,13.3 25.9,13.3" fill="none" stroke="#474c4f" stroke-width="1.4" stroke-linejoin="round"/></g><g transform="translate(860.0 710.0)"><path d="M17.5,21 A7.5,7.5 0 1 1 25,13.6" fill="none" stroke="#474c4f" stroke-width="2"/><polygon points="13.3,12.4 21.8,11 17.3,14.4" fill="#474c4f"/><rect x="21" y="16.5" width="1.7" height="5.2" fill="#474c4f"/><polygon points="19.3,17.4 24.3,17.4 21.8,13.6" fill="#474c4f"/></g><g transform="translate(1020.0 710.0)"><path d="M9.1,17.6 Q10.6,11 12.3,11 Q14,11 15.7,17.6 Q17.4,11 19.1,11 Q20.8,11 22.5,17.6 Q24,12 25.7,11.2" fill="none" stroke="#555a5d" stroke-width="1.3"/></g><g transform="translate(1180.0 710.0)"><path d="M9.4,5 V21.5 H25.8" fill="none" stroke="#474c4f" stroke-width="1.4"/><rect x="12" y="16.5" width="1.3" height="5" fill="#474c4f"/><polygon points="11,17.6 14.2,17.6 12.6,14.1" fill="#474c4f"/><rect x="16.8" y="11.5" width="1.3" height="10" fill="#474c4f"/><polygon points="15.7,12.9 19.1,12.9 17.4,9.1" fill="#474c4f"/><rect x="22.6" y="13.8" width="1.3" height="7.7" fill="#474c4f"/><polygon points="21.5,15.1 24.9,15.1 23.2,11.3" fill="#474c4f"/></g><g transform="translate(1340.0 710.0)"><polygon points="10,13.2 10,17.6 13.8,15.4" fill="#474c4f"/><rect x="15.1" y="11.4" width="3.1" height="10.3" rx="0.5" fill="#474c4f"/><rect x="21" y="5" width="3.8" height="16.7" rx="0.5" fill="#474c4f"/></g><g transform="translate(1500.0 710.0)"><path d="M17.3,21.7 V16.5 Q17.3,13.5 14.5,11 L11.6,8.4 M17.3,16.5 Q17.3,13.5 20.1,11 L23.2,8.4" fill="none" stroke="#474c4f" stroke-width="2.5"/><polygon points="9,6.7 15.1,8.7 11.1,12.6" fill="#474c4f"/><polygon points="25.9,6.7 19.8,8.7 23.8,12.6" fill="#474c4f"/></g><g transform="translate(1660.0 710.0)"><circle cx="11" cy="19.7" r="2" fill="#474c4f"/><line x1="11" y1="19.7" x2="16" y2="15.4" stroke="#474c4f" stroke-width="1.9"/><path d="M22,6 L15.4,12.6 Q14.2,14.2 16.2,15.6 Q17.4,16.2 18.4,15 L25.2,8.8" fill="none" stroke="#474c4f" stroke-width="2"/></g></svg>
<div class="a" style="left:0;top:941px;width:1865px;height:30px;background:linear-gradient(90deg,#646d7a 0%,#6d7683 20%,#7a8290 37%,#979ea6 68%,#a6acb4 100%);border-top:1px solid #4e5662;box-shadow:inset 0 1px 1px rgba(0,0,0,0.25)"></div>
<div class="a nw" style="left:11px;top:949px;font-size:12px;font-weight:bold;color:#1d1d1d">Server Status: Last Calculation: 6/12/23 11:02 AM</div>
<div class="a nw" style="right:56px;top:949px;font-size:12px;font-weight:bold;color:#1d1d1d">License: CONTROL STATION, INC. | 1000 Loops | :&nbsp; | ID:60969850</div>
<div class="a" style="left:0;top:971px;width:1911px;height:2px;background:#d3e8e9"></div></body></html>
